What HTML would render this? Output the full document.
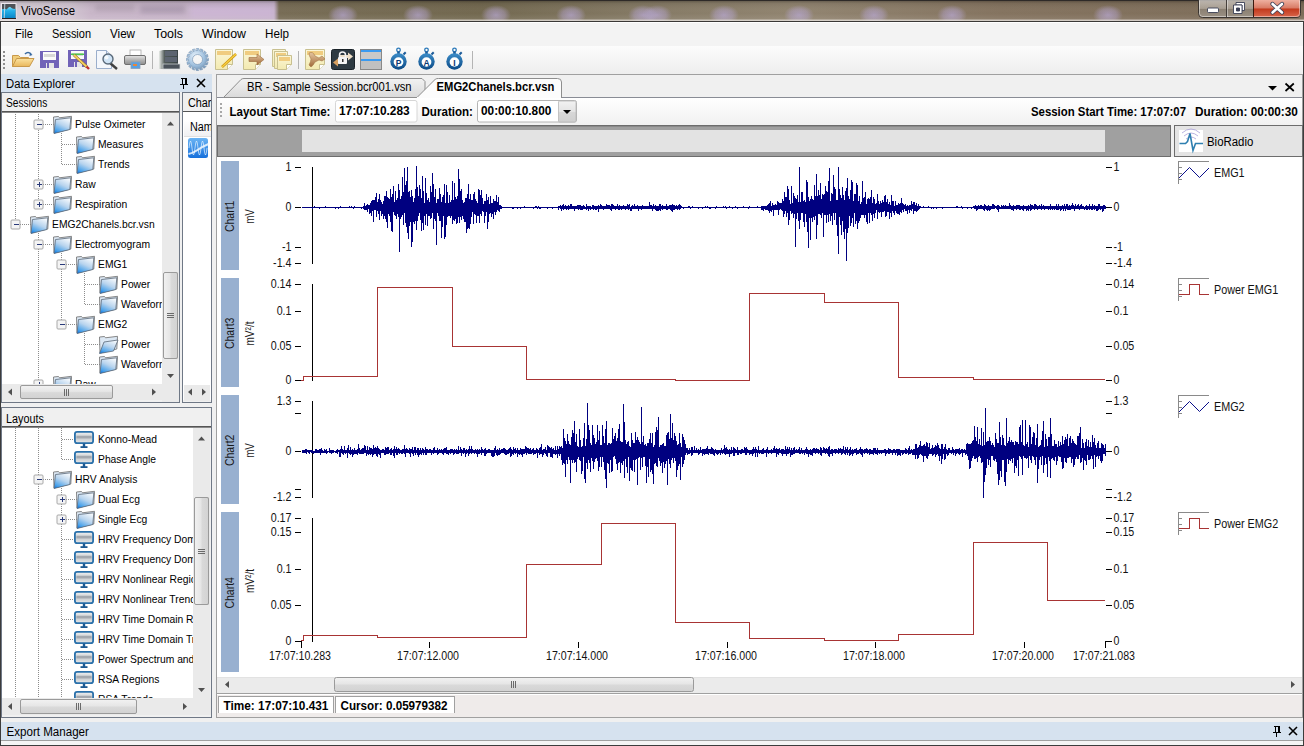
<!DOCTYPE html><html><head><meta charset="utf-8"><style>html,body{margin:0;padding:0;overflow:hidden;background:#f0f0f0}svg{display:block}text{font-family:"Liberation Sans",sans-serif}</style></head><body>
<svg width="1304" height="746" viewBox="0 0 1304 746" shape-rendering="crispEdges">
<defs>
<linearGradient id="gTitle" x1="0" y1="0" x2="1" y2="0"><stop offset="0.0000" stop-color="#d6ced6"/><stop offset="0.0537" stop-color="#d2c6d2"/><stop offset="0.0690" stop-color="#c9b7c9"/><stop offset="0.2101" stop-color="#c3b0c6"/><stop offset="0.2140" stop-color="#776c55"/><stop offset="0.3681" stop-color="#72684f"/><stop offset="0.4985" stop-color="#857a65"/><stop offset="0.6135" stop-color="#918470"/><stop offset="0.7669" stop-color="#84735f"/><stop offset="1.0000" stop-color="#7c6c58"/></linearGradient>
<linearGradient id="gTitleV" x1="0" y1="0" x2="0" y2="1">
 <stop offset="0" stop-color="#000" stop-opacity="0.35"/><stop offset="0.15" stop-color="#000" stop-opacity="0.08"/><stop offset="0.6" stop-color="#fff" stop-opacity="0"/><stop offset="1" stop-color="#fff" stop-opacity="0.12"/></linearGradient>
<radialGradient id="gBlob"><stop offset="0" stop-color="#b8a8d6" stop-opacity="1"/><stop offset="0.6" stop-color="#b8a8d6" stop-opacity="0.6"/><stop offset="1" stop-color="#b8a8d6" stop-opacity="0"/></radialGradient>
<linearGradient id="gMenu" x1="0" y1="0" x2="0" y2="1"><stop offset="0" stop-color="#f5f5f5"/><stop offset="1" stop-color="#f0f0f0"/></linearGradient>
<linearGradient id="gTool" x1="0" y1="0" x2="0" y2="1"><stop offset="0" stop-color="#fcfcfc"/><stop offset="1" stop-color="#eeeeee"/></linearGradient>
<linearGradient id="gThumbH" x1="0" y1="0" x2="0" y2="1"><stop offset="0" stop-color="#f2f2f2"/><stop offset="0.45" stop-color="#e6e6e6"/><stop offset="0.55" stop-color="#d9d9d9"/><stop offset="1" stop-color="#d2d2d2"/></linearGradient>
<linearGradient id="gThumbV" x1="0" y1="0" x2="1" y2="0"><stop offset="0" stop-color="#f2f2f2"/><stop offset="0.45" stop-color="#e6e6e6"/><stop offset="0.55" stop-color="#d9d9d9"/><stop offset="1" stop-color="#d2d2d2"/></linearGradient>
<linearGradient id="gTrackH" x1="0" y1="0" x2="0" y2="1"><stop offset="0" stop-color="#e3e3e3"/><stop offset="0.2" stop-color="#f0f0f0"/><stop offset="1" stop-color="#f2f2f2"/></linearGradient>
<linearGradient id="gTrackV" x1="0" y1="0" x2="1" y2="0"><stop offset="0" stop-color="#e3e3e3"/><stop offset="0.2" stop-color="#f0f0f0"/><stop offset="1" stop-color="#f2f2f2"/></linearGradient>
<linearGradient id="gClose" x1="0" y1="0" x2="0" y2="1"><stop offset="0" stop-color="#eeb0a0"/><stop offset="0.48" stop-color="#d87a64"/><stop offset="0.52" stop-color="#c2391c"/><stop offset="1" stop-color="#d8654a"/></linearGradient>
<linearGradient id="gWinBtn" x1="0" y1="0" x2="0" y2="1"><stop offset="0" stop-color="#dcd8d4" stop-opacity="0.75"/><stop offset="0.48" stop-color="#c4beb6" stop-opacity="0.6"/><stop offset="0.52" stop-color="#8f877c" stop-opacity="0.7"/><stop offset="1" stop-color="#a8a096" stop-opacity="0.7"/></linearGradient>
</defs>
<rect x="0" y="0" width="1304" height="746" fill="#f0f0f0" />
<rect x="0" y="0" width="1304" height="22" fill="url(#gTitle)" />
<filter id="fBlur" x="-20%" y="-50%" width="140%" height="200%"><feGaussianBlur stdDeviation="2.5"/></filter>
<g filter="url(#fBlur)" shape-rendering="auto"><rect x="95" y="5" width="40" height="6" fill="#9a8a9a" opacity="0.45"/><rect x="140" y="6" width="45" height="7" fill="#8a7a90" opacity="0.45"/><rect x="190" y="4" width="84" height="14" fill="#d0b8dc" opacity="0.6"/></g>
<ellipse cx="343" cy="15" rx="15" ry="10" fill="url(#gBlob)" opacity="0.7" shape-rendering="auto"/>
<ellipse cx="418" cy="15" rx="15" ry="10" fill="url(#gBlob)" opacity="0.7" shape-rendering="auto"/>
<ellipse cx="496" cy="15" rx="15" ry="10" fill="url(#gBlob)" opacity="0.7" shape-rendering="auto"/>
<ellipse cx="571" cy="15" rx="15" ry="10" fill="url(#gBlob)" opacity="0.7" shape-rendering="auto"/>
<ellipse cx="643" cy="15" rx="15" ry="10" fill="url(#gBlob)" opacity="0.7" shape-rendering="auto"/>
<ellipse cx="657" cy="15" rx="15" ry="10" fill="url(#gBlob)" opacity="0.7" shape-rendering="auto"/>
<ellipse cx="724" cy="15" rx="15" ry="10" fill="url(#gBlob)" opacity="0.7" shape-rendering="auto"/>
<ellipse cx="799" cy="15" rx="15" ry="10" fill="url(#gBlob)" opacity="0.7" shape-rendering="auto"/>
<ellipse cx="874" cy="15" rx="15" ry="10" fill="url(#gBlob)" opacity="0.7" shape-rendering="auto"/>
<ellipse cx="952" cy="15" rx="15" ry="10" fill="url(#gBlob)" opacity="0.7" shape-rendering="auto"/>
<ellipse cx="1108" cy="15" rx="15" ry="10" fill="url(#gBlob)" opacity="0.7" shape-rendering="auto"/>
<rect x="0" y="0" width="1304" height="22" fill="url(#gTitleV)" />
<rect x="0" y="0" width="1304" height="1" fill="#2e2a28" />
<rect x="0" y="19" width="1304" height="1" fill="#e8e2dc" opacity="0.35"/>
<rect x="0" y="20" width="1304" height="1" fill="#e8e4e0" opacity="0.75"/>
<rect x="0" y="21" width="1304" height="1" fill="#3a3836" />
<defs><linearGradient id="gIco" x1="0" y1="0" x2="0" y2="1"><stop offset="0" stop-color="#7fe0fa"/><stop offset="0.35" stop-color="#25b0e8"/><stop offset="1" stop-color="#0a86c8"/></linearGradient></defs>
<g shape-rendering="auto"><rect x="1" y="3" width="15.5" height="16" fill="#f4f0f4" opacity="0.85"/><rect x="2" y="4" width="13.5" height="14.5" fill="#4e5256"/>
<path d="M2 9.2 L5 8.8 L6.5 9.5 L8.5 7.5 L10 6.8 L11.5 8 L13 8.8 L15.5 9 L15.5 18 L2 18 Z" fill="url(#gIco)"/>
<line x1="4.8" y1="4" x2="4.2" y2="18" stroke="#c8dce6" stroke-width="0.9"/><rect x="2" y="18" width="14" height="1" fill="#2a2222"/></g>
<text x="21" y="15" font-size="12" textLength="54" lengthAdjust="spacingAndGlyphs" >VivoSense</text>
<g shape-rendering="auto">
<path d="M1198.5 0 L1198.5 13.5 Q1198.5 17.5 1202.5 17.5 L1296 17.5 Q1300.5 17.5 1300.5 13.5 L1300.5 0" fill="url(#gWinBtn)" stroke="#3a3430" stroke-width="1"/>
<path d="M1253.5 0 L1253.5 17 L1296 17 Q1300 17 1300 13.5 L1300 0 Z" fill="url(#gClose)"/>
<path d="M1199.5 0.5 V13.5 Q1199.5 16.5 1202.5 16.5 H1296 Q1299.5 16.5 1299.5 13.5 V0.5" fill="none" stroke="#fff" stroke-opacity="0.45"/>
<line x1="1226.5" y1="0" x2="1226.5" y2="17" stroke="#3a3430" stroke-opacity="0.9"/><line x1="1227.5" y1="0" x2="1227.5" y2="17" stroke="#fff" stroke-opacity="0.4"/><line x1="1253.5" y1="0" x2="1253.5" y2="17" stroke="#3a1a10"/>
<rect x="1207.5" y="8" width="11" height="4.5" rx="1" fill="#fff" stroke="#3a3f55" stroke-width="0.9"/>
<path d="M1236 2.5 H1244.5 V10.5 H1242 V5 H1236 Z" fill="#fff" stroke="#3a3f55" stroke-width="0.9"/>
<path d="M1233.5 5 H1242 V13.5 H1233.5 Z M1236.5 8 V11 H1239.5 V8 Z" fill="#fff" fill-rule="evenodd" stroke="#3a3f55" stroke-width="0.9"/>
<rect x="1236.5" y="8" width="3" height="3" fill="#3a3f55"/>
<path d="M1272.5 4 L1282 12.5 M1282 4 L1272.5 12.5" stroke="#3a3f55" stroke-width="4.2" stroke-linecap="round"/><path d="M1272.5 4 L1282 12.5 M1282 4 L1272.5 12.5" stroke="#fff" stroke-width="2.6" stroke-linecap="round"/>
</g>
<rect x="0" y="22" width="1" height="724" fill="#3c3c3c" />
<rect x="1303" y="22" width="1" height="724" fill="#3c3c3c" />
<rect x="0" y="745" width="1304" height="1" fill="#3c3c3c" />
<rect x="1" y="22" width="1302" height="24" fill="#f3f3f3" />
<rect x="1" y="22" width="1302" height="1" fill="#ffffff" />
<text x="15" y="38" font-size="12" textLength="18" lengthAdjust="spacingAndGlyphs" >File</text>
<text x="52" y="38" font-size="12" textLength="39" lengthAdjust="spacingAndGlyphs" >Session</text>
<text x="110" y="38" font-size="12" textLength="25" lengthAdjust="spacingAndGlyphs" >View</text>
<text x="154" y="38" font-size="12" textLength="29" lengthAdjust="spacingAndGlyphs" >Tools</text>
<text x="202" y="38" font-size="12" textLength="44" lengthAdjust="spacingAndGlyphs" >Window</text>
<text x="265" y="38" font-size="12" textLength="24" lengthAdjust="spacingAndGlyphs" >Help</text>
<rect x="1" y="46" width="1302" height="28" fill="url(#gTool)" />
<defs><linearGradient id="gFold" x1="0" y1="0" x2="0" y2="1"><stop offset="0" stop-color="#fbe3a0"/><stop offset="1" stop-color="#e9b65a"/></linearGradient><linearGradient id="gNote" x1="0" y1="0" x2="0" y2="1"><stop offset="0" stop-color="#fbf6d8"/><stop offset="1" stop-color="#f3eab0"/></linearGradient><linearGradient id="gArrowBr" x1="0" y1="0" x2="0" y2="1"><stop offset="0" stop-color="#e6c6a0"/><stop offset="1" stop-color="#a06a3a"/></linearGradient><linearGradient id="gCab" x1="0" y1="0" x2="1" y2="0"><stop offset="0" stop-color="#e8ece8"/><stop offset="0.3" stop-color="#505a58"/><stop offset="1" stop-color="#3a4446"/></linearGradient><radialGradient id="gGear" cx="0.4" cy="0.35" r="0.7"><stop offset="0" stop-color="#e8f2fb"/><stop offset="0.6" stop-color="#9fc0de"/><stop offset="1" stop-color="#6e8fb0"/></radialGradient><linearGradient id="gPrint" x1="0" y1="0" x2="0" y2="1"><stop offset="0" stop-color="#e6e6e6"/><stop offset="0.5" stop-color="#b4b4b4"/><stop offset="1" stop-color="#8e8e8e"/></linearGradient><linearGradient id="gBars" x1="0" y1="0" x2="0" y2="1"><stop offset="0" stop-color="#f2f2f2"/><stop offset="1" stop-color="#9a9a9a"/></linearGradient><linearGradient id="gWatch" x1="0" y1="0" x2="0" y2="1"><stop offset="0" stop-color="#3b8cc8"/><stop offset="1" stop-color="#0c4a86"/></linearGradient></defs>
<g shape-rendering="auto">
<rect x="3" y="51" width="2" height="2" fill="#8e8e8e"/>
<rect x="3" y="55" width="2" height="2" fill="#8e8e8e"/>
<rect x="3" y="59" width="2" height="2" fill="#8e8e8e"/>
<rect x="3" y="63" width="2" height="2" fill="#8e8e8e"/>
<rect x="3" y="67" width="2" height="2" fill="#8e8e8e"/>
<path d="M12.5 55.5 h6 l2 2 h8 v9 h-16 z" fill="#f0cd7a" stroke="#c9994a"/><path d="M12.5 66.5 l4 -8 h17.5 l-4.5 8 z" fill="url(#gFold)" stroke="#c9994a"/><path d="M25 54 q3 -3 6 0" stroke="#3a6aa0" stroke-width="1.6" fill="none"/><path d="M30 52.5 l2.5 2.5 l-3 1z" fill="#3a6aa0"/>
<rect x="40" y="51" width="19" height="17" fill="#7163b8"/><rect x="43" y="52" width="13" height="8" fill="#fafafa"/><rect x="44" y="54" width="11" height="3" fill="#d8d8d8"/><rect x="46" y="63" width="8" height="5" fill="#e6e6e6"/><rect x="47" y="63" width="2" height="5" fill="#7163b8"/>
<rect x="68" y="50" width="19" height="17" fill="#7163b8"/><rect x="71" y="51" width="13" height="8" fill="#fafafa"/><rect x="72" y="53" width="11" height="3" fill="#d8d8d8"/><rect x="74" y="62" width="8" height="5" fill="#e6e6e6"/><rect x="75" y="62" width="2" height="5" fill="#7163b8"/>
<rect x="71" y="53.5" width="13" height="1.5" fill="#4cc84c"/>
<path d="M74 55 L87 67" stroke="#8a6a20" stroke-width="3"/><path d="M74 55 L87 67" stroke="#f4d060" stroke-width="1.8"/><path d="M86.5 66.5 L89 69" stroke="#c03030" stroke-width="2.4"/>
<path d="M96.5 50.5 h10 l5 5 v13 h-15 z" fill="#f4f7fc" stroke="#9aaecc"/><path d="M106.5 50.5 v5 h5" fill="#dde6f2" stroke="#9aaecc"/><path d="M110 63 L117 69" stroke="#404040" stroke-width="2.4"/><circle cx="108" cy="59" r="5" fill="#d0e4f6" stroke="#5a6a7a" stroke-width="1.4"/><circle cx="106.5" cy="57.5" r="2" fill="#fff" opacity="0.8"/>
<rect x="130" y="50" width="11" height="6" fill="#fff" stroke="#aaa" stroke-width="0.8"/><rect x="124.5" y="55.5" width="21" height="9" rx="1.5" fill="url(#gPrint)" stroke="#707070"/><rect x="131" y="62" width="9" height="6.5" fill="#5aa0e0" stroke="#8aa0b8" stroke-width="0.8"/><rect x="133" y="64" width="4" height="2" fill="#e8863a"/>
<rect x="152" y="51" width="1" height="18" fill="#b4b4b4"/>
<path d="M159 51 l4 -1 h15 v19 h-19 z" fill="url(#gCab)"/><rect x="165" y="51" width="12" height="5" fill="#5c6470"/><rect x="165" y="57" width="12" height="5" fill="#5c6470"/><rect x="163" y="64" width="17" height="5" fill="#4a525a" stroke="#d8dcdc" stroke-width="0.7"/>
<path d="M208.4 58.2 L208.4 60.8 L206.3 61.5 L205.7 63.2 L208.1 62.5 L207.1 64.9 L204.9 64.7 L203.7 66.0 L206.2 66.3 L204.3 68.2 L202.3 67.1 L200.7 67.9 L202.9 69.1 L200.5 70.1 L199.0 68.4 L197.3 68.5 L198.8 70.4 L196.2 70.4 L195.5 68.3 L193.8 67.7 L194.5 70.1 L192.1 69.1 L192.3 66.9 L191.0 65.7 L190.7 68.2 L188.8 66.3 L189.9 64.3 L189.1 62.7 L187.9 64.9 L186.9 62.5 L188.6 61.0 L188.5 59.3 L186.6 60.8 L186.6 58.2 L188.7 57.5 L189.3 55.8 L186.9 56.5 L187.9 54.1 L190.1 54.3 L191.3 53.0 L188.8 52.7 L190.7 50.8 L192.7 51.9 L194.3 51.1 L192.1 49.9 L194.5 48.9 L196.0 50.6 L197.7 50.5 L196.2 48.6 L198.8 48.6 L199.5 50.7 L201.2 51.3 L200.5 48.9 L202.9 49.9 L202.7 52.1 L204.0 53.3 L204.3 50.8 L206.2 52.7 L205.1 54.7 L205.9 56.3 L207.1 54.1 L208.1 56.5 L206.4 58.0 L206.5 59.7 Z M202.5 59.5 a5 5 0 1 0 -10 0 a5 5 0 1 0 10 0 Z" fill="url(#gGear)" fill-rule="evenodd" stroke="#7d9ab8" stroke-width="0.7"/>
<path d="M215.5 49.5 h17 v15 l-5 5 h-12 z" fill="url(#gNote)" stroke="#c8c090"/><rect x="217" y="51" width="14" height="4" fill="#f0cc80"/><path d="M232.5 64.5 h-5 v5" fill="#fff" stroke="#c8c090"/>
<path d="M222 67 L236 54" stroke="#c89010" stroke-width="2.6"/><path d="M222 67 L236 54" stroke="#f8d040" stroke-width="1.4"/>
<path d="M243.5 49.5 h17 v15 l-5 5 h-12 z" fill="url(#gNote)" stroke="#c8c090"/><rect x="245" y="51" width="14" height="4" fill="#f0cc80"/><path d="M260.5 64.5 h-5 v5" fill="#fff" stroke="#c8c090"/>
<path d="M249 57.5 h8 v-3.5 l7 5.5 l-7 5.5 v-3.5 h-8 z" fill="url(#gArrowBr)" stroke="#9a6a3a" stroke-width="0.6"/>
<path d="M272.5 49.5 h13 v12 l-5 5 h-8 z" fill="url(#gNote)" stroke="#c8c090"/><rect x="274" y="51" width="10" height="4" fill="#f0cc80"/><path d="M285.5 61.5 h-5 v5" fill="#fff" stroke="#c8c090"/>
<path d="M274.5 51.5 h13 v12 l-5 5 h-8 z" fill="url(#gNote)" stroke="#c8c090"/><rect x="276" y="53" width="10" height="4" fill="#f0cc80"/><path d="M287.5 63.5 h-5 v5" fill="#fff" stroke="#c8c090"/>
<path d="M277.5 55.5 h14 v9 l-5 5 h-9 z" fill="url(#gNote)" stroke="#c8c090"/><rect x="279" y="57" width="11" height="4" fill="#f0cc80"/><path d="M291.5 64.5 h-5 v5" fill="#fff" stroke="#c8c090"/>
<rect x="298" y="51" width="1" height="18" fill="#b4b4b4"/>
<path d="M305.5 49.5 h19 v15 l-5 5 h-14 z" fill="url(#gNote)" stroke="#c8c090"/><rect x="307" y="51" width="16" height="4" fill="#f0cc80"/><path d="M324.5 64.5 h-5 v5" fill="#fff" stroke="#c8c090"/>
<path d="M309 53 q4 -2 6 3 l4 2 l3 -2 l3 3 l-3 2 l-3 -1 l-4 2 q-2 4 -4 5 l-2 -2 q2 -4 2 -6 q-2 -3 -2 -6z" fill="url(#gArrowBr)" stroke="#9a6a3a" stroke-width="0.5"/>
<rect x="331.5" y="49.5" width="23" height="20" rx="2" fill="#2e3a42" stroke="#1a2228"/><path d="M340 55 h8 v-2.5 l5 4 l-5 4 v-2.5 h-8z" fill="#efe0c8"/><path d="M346 64 h-8 v2.5 l-5 -4 l5 -4 v2.5 h8z" fill="#d8a060"/><rect x="338" y="57" width="9" height="7" rx="1" fill="#f4f4f4"/><path d="M339.5 57 v-2 a3 3 0 0 1 6 0 v2" stroke="#f4f4f4" stroke-width="1.5" fill="none"/><rect x="342" y="59" width="1.5" height="3" fill="#333"/>
<rect x="360.5" y="49.5" width="21" height="20" fill="url(#gBars)" stroke="#888"/><rect x="361" y="50" width="20" height="2" fill="#3a9af0"/><rect x="361" y="59" width="20" height="2" fill="#3a9af0"/><rect x="361" y="52" width="20" height="7" fill="#c8c8c8"/><rect x="361" y="61" width="20" height="8" fill="#c0c0c0"/>
<circle cx="398.5" cy="50" r="1.8" fill="none" stroke="#2a78b8" stroke-width="1.3"/><rect x="397.2" y="51.5" width="2.6" height="2.5" fill="#1a5a98"/><path d="M403.5 54.5 l2.2 -2.2" stroke="#1a5a98" stroke-width="2"/><circle cx="398.5" cy="61.5" r="8.2" fill="url(#gWatch)"/><ellipse cx="398.5" cy="62" rx="4.9" ry="4.7" fill="#fff"/><text x="398.5" y="65.6" font-size="8.5" font-weight="bold" fill="#0c3a76" text-anchor="middle">P</text>
<circle cx="426.5" cy="50" r="1.8" fill="none" stroke="#2a78b8" stroke-width="1.3"/><rect x="425.2" y="51.5" width="2.6" height="2.5" fill="#1a5a98"/><path d="M431.5 54.5 l2.2 -2.2" stroke="#1a5a98" stroke-width="2"/><circle cx="426.5" cy="61.5" r="8.2" fill="url(#gWatch)"/><ellipse cx="426.5" cy="62" rx="4.9" ry="4.7" fill="#fff"/><text x="426.5" y="65.6" font-size="8.5" font-weight="bold" fill="#0c3a76" text-anchor="middle">A</text>
<circle cx="454.5" cy="50" r="1.8" fill="none" stroke="#2a78b8" stroke-width="1.3"/><rect x="453.2" y="51.5" width="2.6" height="2.5" fill="#1a5a98"/><path d="M459.5 54.5 l2.2 -2.2" stroke="#1a5a98" stroke-width="2"/><circle cx="454.5" cy="61.5" r="8.2" fill="url(#gWatch)"/><ellipse cx="454.5" cy="62" rx="4.9" ry="4.7" fill="#fff"/><text x="454.5" y="65.6" font-size="8.5" font-weight="bold" fill="#0c3a76" text-anchor="middle">I</text>
<rect x="472" y="51" width="1" height="18" fill="#b4b4b4"/>
</g>
<defs><linearGradient id="gFolder" x1="0.7" y1="0" x2="0.2" y2="1"><stop offset="0" stop-color="#f4f8fc"/><stop offset="0.45" stop-color="#b8d4ee"/><stop offset="0.85" stop-color="#4aa2ea"/><stop offset="1" stop-color="#1a7ee0"/></linearGradient><linearGradient id="gFolderB" x1="0" y1="0" x2="0" y2="1"><stop offset="0" stop-color="#cfe2f4"/><stop offset="1" stop-color="#7fb0de"/></linearGradient><linearGradient id="gLay" x1="0" y1="0" x2="0" y2="1"><stop offset="0" stop-color="#f4f4f4"/><stop offset="0.5" stop-color="#c4c8cc"/><stop offset="1" stop-color="#e8e8e8"/></linearGradient><clipPath id="cpSess"><rect x="2" y="113" width="160" height="271"/></clipPath><clipPath id="cpLay"><rect x="2" y="428" width="191" height="270"/></clipPath></defs>
<rect x="1" y="74" width="211" height="18" fill="#d6e2ef" />
<text x="6" y="88" font-size="12" textLength="68.96" lengthAdjust="spacingAndGlyphs" >Data Explorer</text>
<g shape-rendering="crispEdges"><rect x="181" y="78" width="6" height="1" fill="#000"/><rect x="182" y="79" width="1" height="5" fill="#000"/><rect x="185" y="79" width="2" height="5" fill="#000"/><rect x="180" y="84" width="8" height="1" fill="#000"/><rect x="183" y="85" width="1" height="4" fill="#000"/></g>
<path d="M197 79 L205 87 M205 79 L197 87" stroke="#000" stroke-width="1.6" shape-rendering="auto"/>
<rect x="1" y="92" width="179" height="1" fill="#6f7886" />
<rect x="1" y="402" width="179" height="1" fill="#6f7886" />
<rect x="1" y="92" width="1" height="311" fill="#6f7886" />
<rect x="179" y="92" width="1" height="311" fill="#6f7886" />
<rect x="2" y="93" width="177" height="18" fill="#f0f0f0" />
<rect x="2" y="111" width="177" height="1" fill="#555555" />
<rect x="2" y="112" width="177" height="1" fill="#8a8a8a" />
<text x="6" y="107" font-size="12" textLength="41.24" lengthAdjust="spacingAndGlyphs" >Sessions</text>
<rect x="2" y="113" width="160" height="271" fill="#ffffff" />
<line x1="15.5" y1="112" x2="15.5" y2="224" stroke="#8c8c8c" stroke-dasharray="1 1" clip-path="url(#cpSess)"/>
<line x1="38.5" y1="112" x2="38.5" y2="204" stroke="#8c8c8c" stroke-dasharray="1 1" clip-path="url(#cpSess)"/>
<line x1="61.5" y1="133" x2="61.5" y2="164" stroke="#8c8c8c" stroke-dasharray="1 1" clip-path="url(#cpSess)"/>
<line x1="38.5" y1="233" x2="38.5" y2="390" stroke="#8c8c8c" stroke-dasharray="1 1" clip-path="url(#cpSess)"/>
<line x1="61.5" y1="253" x2="61.5" y2="324" stroke="#8c8c8c" stroke-dasharray="1 1" clip-path="url(#cpSess)"/>
<line x1="84.5" y1="273" x2="84.5" y2="304" stroke="#8c8c8c" stroke-dasharray="1 1" clip-path="url(#cpSess)"/>
<line x1="84.5" y1="333" x2="84.5" y2="364" stroke="#8c8c8c" stroke-dasharray="1 1" clip-path="url(#cpSess)"/>
<line x1="43" y1="124.5" x2="55" y2="124.5" stroke="#8c8c8c" stroke-dasharray="1 1" clip-path="url(#cpSess)"/>
<line x1="62" y1="144.5" x2="78" y2="144.5" stroke="#8c8c8c" stroke-dasharray="1 1" clip-path="url(#cpSess)"/>
<line x1="62" y1="164.5" x2="78" y2="164.5" stroke="#8c8c8c" stroke-dasharray="1 1" clip-path="url(#cpSess)"/>
<line x1="43" y1="184.5" x2="55" y2="184.5" stroke="#8c8c8c" stroke-dasharray="1 1" clip-path="url(#cpSess)"/>
<line x1="43" y1="204.5" x2="55" y2="204.5" stroke="#8c8c8c" stroke-dasharray="1 1" clip-path="url(#cpSess)"/>
<line x1="20" y1="224.5" x2="32" y2="224.5" stroke="#8c8c8c" stroke-dasharray="1 1" clip-path="url(#cpSess)"/>
<line x1="43" y1="244.5" x2="55" y2="244.5" stroke="#8c8c8c" stroke-dasharray="1 1" clip-path="url(#cpSess)"/>
<line x1="66" y1="264.5" x2="78" y2="264.5" stroke="#8c8c8c" stroke-dasharray="1 1" clip-path="url(#cpSess)"/>
<line x1="85" y1="284.5" x2="101" y2="284.5" stroke="#8c8c8c" stroke-dasharray="1 1" clip-path="url(#cpSess)"/>
<line x1="85" y1="304.5" x2="101" y2="304.5" stroke="#8c8c8c" stroke-dasharray="1 1" clip-path="url(#cpSess)"/>
<line x1="66" y1="324.5" x2="78" y2="324.5" stroke="#8c8c8c" stroke-dasharray="1 1" clip-path="url(#cpSess)"/>
<line x1="85" y1="344.5" x2="101" y2="344.5" stroke="#8c8c8c" stroke-dasharray="1 1" clip-path="url(#cpSess)"/>
<line x1="85" y1="364.5" x2="101" y2="364.5" stroke="#8c8c8c" stroke-dasharray="1 1" clip-path="url(#cpSess)"/>
<line x1="43" y1="384.5" x2="55" y2="384.5" stroke="#8c8c8c" stroke-dasharray="1 1" clip-path="url(#cpSess)"/>
<g clip-path="url(#cpSess)"><rect x="34.0" y="120.0" width="9" height="9" rx="1" fill="#f4f4f4" stroke="#a8a8a8" shape-rendering="auto"/><rect x="36.5" y="124.0" width="5" height="1" fill="#2a3a7a"/></g>
<g clip-path="url(#cpSess)" shape-rendering="auto"><path d="M53.5 117 L58.5 116.5 L59.5 117.8 L71.5 116.3 L70.8 129 L54 133 Z" fill="#dce8f4" stroke="#7a7a7a" stroke-width="0.9"/><path d="M55.5 119.5 L70.8 117.8 L69.8 129.5 L54 133.5 Z" fill="url(#gFolder)" stroke="#5a6878" stroke-width="0.8"/></g>
<text x="75" y="128" font-size="11.6" textLength="70.52" lengthAdjust="spacingAndGlyphs" clip-path="url(#cpSess)">Pulse Oximeter</text>
<g clip-path="url(#cpSess)" shape-rendering="auto"><path d="M76.5 137 L81.5 136.5 L82.5 137.8 L94.5 136.3 L93.8 149 L77 153 Z" fill="#dce8f4" stroke="#7a7a7a" stroke-width="0.9"/><path d="M78.5 139.5 L93.8 137.8 L92.8 149.5 L77 153.5 Z" fill="url(#gFolder)" stroke="#5a6878" stroke-width="0.8"/></g>
<text x="98" y="148" font-size="11.6" textLength="45.3" lengthAdjust="spacingAndGlyphs" clip-path="url(#cpSess)">Measures</text>
<g clip-path="url(#cpSess)" shape-rendering="auto"><path d="M76.5 157 L81.5 156.5 L82.5 157.8 L94.5 156.3 L93.8 169 L77 173 Z" fill="#dce8f4" stroke="#7a7a7a" stroke-width="0.9"/><path d="M78.5 159.5 L93.8 157.8 L92.8 169.5 L77 173.5 Z" fill="url(#gFolder)" stroke="#5a6878" stroke-width="0.8"/></g>
<text x="98" y="168" font-size="11.6" textLength="31.72" lengthAdjust="spacingAndGlyphs" clip-path="url(#cpSess)">Trends</text>
<g clip-path="url(#cpSess)"><rect x="34.0" y="180.0" width="9" height="9" rx="1" fill="#f4f4f4" stroke="#a8a8a8" shape-rendering="auto"/><rect x="36.5" y="184.0" width="5" height="1" fill="#2a3a7a"/><rect x="38.5" y="182.0" width="1" height="5" fill="#2a3a7a"/></g>
<g clip-path="url(#cpSess)" shape-rendering="auto"><path d="M53.5 177 L58.5 176.5 L59.5 177.8 L71.5 176.3 L70.8 189 L54 193 Z" fill="#dce8f4" stroke="#7a7a7a" stroke-width="0.9"/><path d="M55.5 179.5 L70.8 177.8 L69.8 189.5 L54 193.5 Z" fill="url(#gFolder)" stroke="#5a6878" stroke-width="0.8"/></g>
<text x="75" y="188" font-size="11.6" textLength="20.64" lengthAdjust="spacingAndGlyphs" clip-path="url(#cpSess)">Raw</text>
<g clip-path="url(#cpSess)"><rect x="34.0" y="200.0" width="9" height="9" rx="1" fill="#f4f4f4" stroke="#a8a8a8" shape-rendering="auto"/><rect x="36.5" y="204.0" width="5" height="1" fill="#2a3a7a"/><rect x="38.5" y="202.0" width="1" height="5" fill="#2a3a7a"/></g>
<g clip-path="url(#cpSess)" shape-rendering="auto"><path d="M53.5 197 L58.5 196.5 L59.5 197.8 L71.5 196.3 L70.8 209 L54 213 Z" fill="#dce8f4" stroke="#7a7a7a" stroke-width="0.9"/><path d="M55.5 199.5 L70.8 197.8 L69.8 209.5 L54 213.5 Z" fill="url(#gFolder)" stroke="#5a6878" stroke-width="0.8"/></g>
<text x="75" y="208" font-size="11.6" textLength="52.2" lengthAdjust="spacingAndGlyphs" clip-path="url(#cpSess)">Respiration</text>
<g clip-path="url(#cpSess)"><rect x="11.0" y="220.0" width="9" height="9" rx="1" fill="#f4f4f4" stroke="#a8a8a8" shape-rendering="auto"/><rect x="13.5" y="224.0" width="5" height="1" fill="#2a3a7a"/></g>
<g clip-path="url(#cpSess)" shape-rendering="auto"><path d="M30.5 217 L35.5 216.5 L36.5 217.8 L48.5 216.3 L47.8 229 L31 233 Z" fill="#dce8f4" stroke="#7a7a7a" stroke-width="0.9"/><path d="M32.5 219.5 L47.8 217.8 L46.8 229.5 L31 233.5 Z" fill="url(#gFolder)" stroke="#5a6878" stroke-width="0.8"/></g>
<text x="52" y="228" font-size="11.6" textLength="102.64" lengthAdjust="spacingAndGlyphs" clip-path="url(#cpSess)">EMG2Chanels.bcr.vsn</text>
<g clip-path="url(#cpSess)"><rect x="34.0" y="240.0" width="9" height="9" rx="1" fill="#f4f4f4" stroke="#a8a8a8" shape-rendering="auto"/><rect x="36.5" y="244.0" width="5" height="1" fill="#2a3a7a"/></g>
<g clip-path="url(#cpSess)" shape-rendering="auto"><path d="M53.5 237 L58.5 236.5 L59.5 237.8 L71.5 236.3 L70.8 249 L54 253 Z" fill="#dce8f4" stroke="#7a7a7a" stroke-width="0.9"/><path d="M55.5 239.5 L70.8 237.8 L69.8 249.5 L54 253.5 Z" fill="url(#gFolder)" stroke="#5a6878" stroke-width="0.8"/></g>
<text x="75" y="248" font-size="11.6" textLength="75.11" lengthAdjust="spacingAndGlyphs" clip-path="url(#cpSess)">Electromyogram</text>
<g clip-path="url(#cpSess)"><rect x="57.0" y="260.0" width="9" height="9" rx="1" fill="#f4f4f4" stroke="#a8a8a8" shape-rendering="auto"/><rect x="59.5" y="264.0" width="5" height="1" fill="#2a3a7a"/></g>
<g clip-path="url(#cpSess)" shape-rendering="auto"><path d="M76.5 257 L81.5 256.5 L82.5 257.8 L94.5 256.3 L93.8 269 L77 273 Z" fill="#dce8f4" stroke="#7a7a7a" stroke-width="0.9"/><path d="M78.5 259.5 L93.8 257.8 L92.8 269.5 L77 273.5 Z" fill="url(#gFolder)" stroke="#5a6878" stroke-width="0.8"/></g>
<text x="98" y="268" font-size="11.6" textLength="29.23" lengthAdjust="spacingAndGlyphs" clip-path="url(#cpSess)">EMG1</text>
<g clip-path="url(#cpSess)" shape-rendering="auto"><path d="M99.5 277 L104.5 276.5 L105.5 277.8 L117.5 276.3 L116.8 289 L100 293 Z" fill="#dce8f4" stroke="#7a7a7a" stroke-width="0.9"/><path d="M101.5 279.5 L116.8 277.8 L115.8 289.5 L100 293.5 Z" fill="url(#gFolder)" stroke="#5a6878" stroke-width="0.8"/></g>
<text x="121" y="288" font-size="11.6" textLength="29.25" lengthAdjust="spacingAndGlyphs" clip-path="url(#cpSess)">Power</text>
<g clip-path="url(#cpSess)" shape-rendering="auto"><path d="M99.5 297 L104.5 296.5 L105.5 297.8 L117.5 296.3 L116.8 309 L100 313 Z" fill="#dce8f4" stroke="#7a7a7a" stroke-width="0.9"/><path d="M101.5 299.5 L116.8 297.8 L115.8 309.5 L100 313.5 Z" fill="url(#gFolder)" stroke="#5a6878" stroke-width="0.8"/></g>
<text x="121" y="308" font-size="11.6" textLength="46.61" lengthAdjust="spacingAndGlyphs" clip-path="url(#cpSess)">Waveform</text>
<g clip-path="url(#cpSess)"><rect x="57.0" y="320.0" width="9" height="9" rx="1" fill="#f4f4f4" stroke="#a8a8a8" shape-rendering="auto"/><rect x="59.5" y="324.0" width="5" height="1" fill="#2a3a7a"/></g>
<g clip-path="url(#cpSess)" shape-rendering="auto"><path d="M76.5 317 L81.5 316.5 L82.5 317.8 L94.5 316.3 L93.8 329 L77 333 Z" fill="#dce8f4" stroke="#7a7a7a" stroke-width="0.9"/><path d="M78.5 319.5 L93.8 317.8 L92.8 329.5 L77 333.5 Z" fill="url(#gFolder)" stroke="#5a6878" stroke-width="0.8"/></g>
<text x="98" y="328" font-size="11.6" textLength="29.23" lengthAdjust="spacingAndGlyphs" clip-path="url(#cpSess)">EMG2</text>
<g clip-path="url(#cpSess)" shape-rendering="auto"><path d="M99.5 337 L104.5 336.5 L105.5 337.8 L117.5 336.3 L116.8 349 L100 353 Z" fill="#dce8f4" stroke="#7a7a7a" stroke-width="0.9"/><path d="M104 342 L118 340 L113.5 351 L99.5 353.5 Z" fill="url(#gFolder)" stroke="#5a6878" stroke-width="0.8"/></g>
<text x="121" y="348" font-size="11.6" textLength="29.25" lengthAdjust="spacingAndGlyphs" clip-path="url(#cpSess)">Power</text>
<g clip-path="url(#cpSess)" shape-rendering="auto"><path d="M99.5 357 L104.5 356.5 L105.5 357.8 L117.5 356.3 L116.8 369 L100 373 Z" fill="#dce8f4" stroke="#7a7a7a" stroke-width="0.9"/><path d="M101.5 359.5 L116.8 357.8 L115.8 369.5 L100 373.5 Z" fill="url(#gFolder)" stroke="#5a6878" stroke-width="0.8"/></g>
<text x="121" y="368" font-size="11.6" textLength="46.61" lengthAdjust="spacingAndGlyphs" clip-path="url(#cpSess)">Waveform</text>
<g clip-path="url(#cpSess)"><rect x="34.0" y="380.0" width="9" height="9" rx="1" fill="#f4f4f4" stroke="#a8a8a8" shape-rendering="auto"/><rect x="36.5" y="384.0" width="5" height="1" fill="#2a3a7a"/><rect x="38.5" y="382.0" width="1" height="5" fill="#2a3a7a"/></g>
<g clip-path="url(#cpSess)" shape-rendering="auto"><path d="M53.5 377 L58.5 376.5 L59.5 377.8 L71.5 376.3 L70.8 389 L54 393 Z" fill="#dce8f4" stroke="#7a7a7a" stroke-width="0.9"/><path d="M55.5 379.5 L70.8 377.8 L69.8 389.5 L54 393.5 Z" fill="url(#gFolder)" stroke="#5a6878" stroke-width="0.8"/></g>
<text x="75" y="388" font-size="11.6" textLength="20.64" lengthAdjust="spacingAndGlyphs" clip-path="url(#cpSess)">Raw</text>
<rect x="162" y="113" width="17" height="271" fill="#eaeaea" />
<rect x="163" y="272" width="15" height="87" fill="url(#gThumbV)" rx="1.5"/>
<rect x="163.5" y="272.5" width="14" height="86" rx="1.5" fill="none" stroke="#9a9a9a" shape-rendering="auto"/>
<rect x="167" y="313" width="7" height="1" fill="#6a6a6a" />
<rect x="167" y="315" width="7" height="1" fill="#6a6a6a" />
<rect x="167" y="317" width="7" height="1" fill="#6a6a6a" />
<path d="M167 125.5 l3.5 -4 l3.5 4z" fill="#505050" shape-rendering="auto"/>
<path d="M167 374 l3.5 4 l3.5 -4z" fill="#505050" shape-rendering="auto"/>
<rect x="2" y="384" width="160" height="16" fill="#eaeaea" />
<rect x="20.5" y="385.5" width="92" height="13" rx="1.5" fill="url(#gThumbH)" stroke="#9a9a9a" shape-rendering="auto"/>
<rect x="64" y="389" width="1" height="7" fill="#6a6a6a" />
<rect x="66" y="389" width="1" height="7" fill="#6a6a6a" />
<rect x="68" y="389" width="1" height="7" fill="#6a6a6a" />
<path d="M12 388.5 l-4 3.5 l4 3.5z" fill="#505050" shape-rendering="auto"/>
<path d="M152 388.5 l4 3.5 l-4 3.5z" fill="#505050" shape-rendering="auto"/>
<rect x="162" y="384" width="17" height="18" fill="#eaeaea" />
<rect x="182" y="92" width="30" height="1" fill="#6f7886" />
<rect x="182" y="402" width="30" height="1" fill="#6f7886" />
<rect x="182" y="92" width="1" height="311" fill="#6f7886" />
<rect x="211" y="92" width="1" height="311" fill="#6f7886" />
<rect x="183" y="93" width="28" height="18" fill="#f0f0f0" />
<rect x="183" y="111" width="28" height="1" fill="#555555" />
<clipPath id="cpChart"><rect x="183" y="93" width="28" height="308"/></clipPath>
<text x="188" y="107" font-size="12" textLength="26.41" lengthAdjust="spacingAndGlyphs" clip-path="url(#cpChart)">Chart</text>
<rect x="183" y="112" width="28" height="288" fill="#ffffff" />
<defs><linearGradient id="gColH" x1="0" y1="0" x2="0" y2="1"><stop offset="0" stop-color="#ffffff"/><stop offset="1" stop-color="#f0f0f2"/></linearGradient></defs>
<rect x="184" y="120" width="27" height="16" fill="url(#gColH)" />
<rect x="184" y="136" width="27" height="1" fill="#e0e0e0" />
<text x="190" y="131" font-size="12" textLength="28.81" lengthAdjust="spacingAndGlyphs" clip-path="url(#cpChart)">Name</text>
<defs><linearGradient id="gChIco" x1="0" y1="0" x2="0" y2="1"><stop offset="0" stop-color="#6ab4f4"/><stop offset="1" stop-color="#1670dc"/></linearGradient></defs>
<g shape-rendering="auto" clip-path="url(#cpChart)"><rect x="188" y="138" width="20" height="20" rx="2.5" fill="url(#gChIco)"/><path d="M189 148 q1.5 -14 3 0 t3 0 t3 0 t3 0 t3 0 t3 0" stroke="#e8f4ff" stroke-opacity="0.75" fill="none" stroke-width="0.9"/><path d="M188.5 154 q5 -1 9 -4 t11 -6" stroke="#f0f8ff" stroke-opacity="0.85" fill="none" stroke-width="2"/></g>
<rect x="184" y="385" width="26" height="16" fill="#eaeaea" />
<path d="M192 388.5 l-4 3.5 l4 3.5z M202 388.5 l4 3.5 l-4 3.5z" fill="#505050" shape-rendering="auto"/>
<rect x="1" y="407" width="211" height="1" fill="#6f7886" />
<rect x="1" y="717" width="211" height="1" fill="#6f7886" />
<rect x="1" y="407" width="1" height="311" fill="#6f7886" />
<rect x="211" y="407" width="1" height="311" fill="#6f7886" />
<rect x="2" y="408" width="209" height="18" fill="#f0f0f0" />
<rect x="2" y="426" width="209" height="1" fill="#555555" />
<rect x="2" y="427" width="209" height="1" fill="#8a8a8a" />
<text x="6" y="422.8" font-size="12" textLength="37.81" lengthAdjust="spacingAndGlyphs" >Layouts</text>
<rect x="2" y="428" width="191" height="270" fill="#ffffff" />
<line x1="15.5" y1="428" x2="15.5" y2="698" stroke="#8c8c8c" stroke-dasharray="1 1" clip-path="url(#cpLay)"/>
<line x1="38.5" y1="428" x2="38.5" y2="698" stroke="#8c8c8c" stroke-dasharray="1 1" clip-path="url(#cpLay)"/>
<line x1="61.5" y1="428" x2="61.5" y2="459" stroke="#8c8c8c" stroke-dasharray="1 1" clip-path="url(#cpLay)"/>
<line x1="61.5" y1="488" x2="61.5" y2="698" stroke="#8c8c8c" stroke-dasharray="1 1" clip-path="url(#cpLay)"/>
<line x1="62" y1="439.5" x2="78" y2="439.5" stroke="#8c8c8c" stroke-dasharray="1 1" clip-path="url(#cpLay)"/>
<line x1="62" y1="459.5" x2="78" y2="459.5" stroke="#8c8c8c" stroke-dasharray="1 1" clip-path="url(#cpLay)"/>
<line x1="43" y1="479.5" x2="55" y2="479.5" stroke="#8c8c8c" stroke-dasharray="1 1" clip-path="url(#cpLay)"/>
<line x1="66" y1="499.5" x2="78" y2="499.5" stroke="#8c8c8c" stroke-dasharray="1 1" clip-path="url(#cpLay)"/>
<line x1="66" y1="519.5" x2="78" y2="519.5" stroke="#8c8c8c" stroke-dasharray="1 1" clip-path="url(#cpLay)"/>
<line x1="62" y1="539.5" x2="78" y2="539.5" stroke="#8c8c8c" stroke-dasharray="1 1" clip-path="url(#cpLay)"/>
<line x1="62" y1="559.5" x2="78" y2="559.5" stroke="#8c8c8c" stroke-dasharray="1 1" clip-path="url(#cpLay)"/>
<line x1="62" y1="579.5" x2="78" y2="579.5" stroke="#8c8c8c" stroke-dasharray="1 1" clip-path="url(#cpLay)"/>
<line x1="62" y1="599.5" x2="78" y2="599.5" stroke="#8c8c8c" stroke-dasharray="1 1" clip-path="url(#cpLay)"/>
<line x1="62" y1="619.5" x2="78" y2="619.5" stroke="#8c8c8c" stroke-dasharray="1 1" clip-path="url(#cpLay)"/>
<line x1="62" y1="639.5" x2="78" y2="639.5" stroke="#8c8c8c" stroke-dasharray="1 1" clip-path="url(#cpLay)"/>
<line x1="62" y1="659.5" x2="78" y2="659.5" stroke="#8c8c8c" stroke-dasharray="1 1" clip-path="url(#cpLay)"/>
<line x1="62" y1="679.5" x2="78" y2="679.5" stroke="#8c8c8c" stroke-dasharray="1 1" clip-path="url(#cpLay)"/>
<line x1="62" y1="699.5" x2="78" y2="699.5" stroke="#8c8c8c" stroke-dasharray="1 1" clip-path="url(#cpLay)"/>
<g clip-path="url(#cpLay)" shape-rendering="auto"><rect x="74.9" y="431.9" width="18.2" height="11.2" rx="2.2" fill="url(#gLay)" stroke="#2a70aa" stroke-width="1.8"/><rect x="76.5" y="435.8" width="15" height="2.6" fill="#a4a8ae"/><rect x="82.8" y="443.5" width="2.4" height="3.5" fill="#1e5a92"/><rect x="80.5" y="446.2" width="7" height="1.8" fill="#1e5a92"/></g>
<text x="98" y="443" font-size="11.6" textLength="59.09" lengthAdjust="spacingAndGlyphs" clip-path="url(#cpLay)">Konno-Mead</text>
<g clip-path="url(#cpLay)" shape-rendering="auto"><rect x="74.9" y="451.9" width="18.2" height="11.2" rx="2.2" fill="url(#gLay)" stroke="#2a70aa" stroke-width="1.8"/><rect x="76.5" y="455.8" width="15" height="2.6" fill="#a4a8ae"/><rect x="82.8" y="463.5" width="2.4" height="3.5" fill="#1e5a92"/><rect x="80.5" y="466.2" width="7" height="1.8" fill="#1e5a92"/></g>
<text x="98" y="463" font-size="11.6" textLength="57.95" lengthAdjust="spacingAndGlyphs" clip-path="url(#cpLay)">Phase Angle</text>
<g clip-path="url(#cpLay)"><rect x="34.0" y="475.0" width="9" height="9" rx="1" fill="#f4f4f4" stroke="#a8a8a8" shape-rendering="auto"/><rect x="36.5" y="479.0" width="5" height="1" fill="#2a3a7a"/></g>
<g clip-path="url(#cpLay)" shape-rendering="auto"><path d="M53.5 472 L58.5 471.5 L59.5 472.8 L71.5 471.3 L70.8 484 L54 488 Z" fill="#dce8f4" stroke="#7a7a7a" stroke-width="0.9"/><path d="M55.5 474.5 L70.8 472.8 L69.8 484.5 L54 488.5 Z" fill="url(#gFolder)" stroke="#5a6878" stroke-width="0.8"/></g>
<text x="75" y="483" font-size="11.6" textLength="62.32" lengthAdjust="spacingAndGlyphs" clip-path="url(#cpLay)">HRV Analysis</text>
<g clip-path="url(#cpLay)"><rect x="57.0" y="495.0" width="9" height="9" rx="1" fill="#f4f4f4" stroke="#a8a8a8" shape-rendering="auto"/><rect x="59.5" y="499.0" width="5" height="1" fill="#2a3a7a"/><rect x="61.5" y="497.0" width="1" height="5" fill="#2a3a7a"/></g>
<g clip-path="url(#cpLay)" shape-rendering="auto"><path d="M76.5 492 L81.5 491.5 L82.5 492.8 L94.5 491.3 L93.8 504 L77 508 Z" fill="#dce8f4" stroke="#7a7a7a" stroke-width="0.9"/><path d="M78.5 494.5 L93.8 492.8 L92.8 504.5 L77 508.5 Z" fill="url(#gFolder)" stroke="#5a6878" stroke-width="0.8"/></g>
<text x="98" y="503" font-size="11.6" textLength="41.87" lengthAdjust="spacingAndGlyphs" clip-path="url(#cpLay)">Dual Ecg</text>
<g clip-path="url(#cpLay)"><rect x="57.0" y="515.0" width="9" height="9" rx="1" fill="#f4f4f4" stroke="#a8a8a8" shape-rendering="auto"/><rect x="59.5" y="519.0" width="5" height="1" fill="#2a3a7a"/><rect x="61.5" y="517.0" width="1" height="5" fill="#2a3a7a"/></g>
<g clip-path="url(#cpLay)" shape-rendering="auto"><path d="M76.5 512 L81.5 511.5 L82.5 512.8 L94.5 511.3 L93.8 524 L77 528 Z" fill="#dce8f4" stroke="#7a7a7a" stroke-width="0.9"/><path d="M78.5 514.5 L93.8 512.8 L92.8 524.5 L77 528.5 Z" fill="url(#gFolder)" stroke="#5a6878" stroke-width="0.8"/></g>
<text x="98" y="523" font-size="11.6" textLength="49.33" lengthAdjust="spacingAndGlyphs" clip-path="url(#cpLay)">Single Ecg</text>
<g clip-path="url(#cpLay)" shape-rendering="auto"><rect x="74.9" y="531.9" width="18.2" height="11.2" rx="2.2" fill="url(#gLay)" stroke="#2a70aa" stroke-width="1.8"/><rect x="76.5" y="535.8" width="15" height="2.6" fill="#a4a8ae"/><rect x="82.8" y="543.5" width="2.4" height="3.5" fill="#1e5a92"/><rect x="80.5" y="546.2" width="7" height="1.8" fill="#1e5a92"/></g>
<text x="98" y="543" font-size="11.6" textLength="111.64" lengthAdjust="spacingAndGlyphs" clip-path="url(#cpLay)">HRV Frequency Domain</text>
<g clip-path="url(#cpLay)" shape-rendering="auto"><rect x="74.9" y="551.9" width="18.2" height="11.2" rx="2.2" fill="url(#gLay)" stroke="#2a70aa" stroke-width="1.8"/><rect x="76.5" y="555.8" width="15" height="2.6" fill="#a4a8ae"/><rect x="82.8" y="563.5" width="2.4" height="3.5" fill="#1e5a92"/><rect x="80.5" y="566.2" width="7" height="1.8" fill="#1e5a92"/></g>
<text x="98" y="563" font-size="11.6" textLength="111.64" lengthAdjust="spacingAndGlyphs" clip-path="url(#cpLay)">HRV Frequency Domain</text>
<g clip-path="url(#cpLay)" shape-rendering="auto"><rect x="74.9" y="571.9" width="18.2" height="11.2" rx="2.2" fill="url(#gLay)" stroke="#2a70aa" stroke-width="1.8"/><rect x="76.5" y="575.8" width="15" height="2.6" fill="#a4a8ae"/><rect x="82.8" y="583.5" width="2.4" height="3.5" fill="#1e5a92"/><rect x="80.5" y="586.2" width="7" height="1.8" fill="#1e5a92"/></g>
<text x="98" y="583" font-size="11.6" textLength="109.37" lengthAdjust="spacingAndGlyphs" clip-path="url(#cpLay)">HRV Nonlinear Regions</text>
<g clip-path="url(#cpLay)" shape-rendering="auto"><rect x="74.9" y="591.9" width="18.2" height="11.2" rx="2.2" fill="url(#gLay)" stroke="#2a70aa" stroke-width="1.8"/><rect x="76.5" y="595.8" width="15" height="2.6" fill="#a4a8ae"/><rect x="82.8" y="603.5" width="2.4" height="3.5" fill="#1e5a92"/><rect x="80.5" y="606.2" width="7" height="1.8" fill="#1e5a92"/></g>
<text x="98" y="603" font-size="11.6" textLength="103.05" lengthAdjust="spacingAndGlyphs" clip-path="url(#cpLay)">HRV Nonlinear Trends</text>
<g clip-path="url(#cpLay)" shape-rendering="auto"><rect x="74.9" y="611.9" width="18.2" height="11.2" rx="2.2" fill="url(#gLay)" stroke="#2a70aa" stroke-width="1.8"/><rect x="76.5" y="615.8" width="15" height="2.6" fill="#a4a8ae"/><rect x="82.8" y="623.5" width="2.4" height="3.5" fill="#1e5a92"/><rect x="80.5" y="626.2" width="7" height="1.8" fill="#1e5a92"/></g>
<text x="98" y="623" font-size="11.6" textLength="125.97" lengthAdjust="spacingAndGlyphs" clip-path="url(#cpLay)">HRV Time Domain Regions</text>
<g clip-path="url(#cpLay)" shape-rendering="auto"><rect x="74.9" y="631.9" width="18.2" height="11.2" rx="2.2" fill="url(#gLay)" stroke="#2a70aa" stroke-width="1.8"/><rect x="76.5" y="635.8" width="15" height="2.6" fill="#a4a8ae"/><rect x="82.8" y="643.5" width="2.4" height="3.5" fill="#1e5a92"/><rect x="80.5" y="646.2" width="7" height="1.8" fill="#1e5a92"/></g>
<text x="98" y="643" font-size="11.6" textLength="119.64" lengthAdjust="spacingAndGlyphs" clip-path="url(#cpLay)">HRV Time Domain Trends</text>
<g clip-path="url(#cpLay)" shape-rendering="auto"><rect x="74.9" y="651.9" width="18.2" height="11.2" rx="2.2" fill="url(#gLay)" stroke="#2a70aa" stroke-width="1.8"/><rect x="76.5" y="655.8" width="15" height="2.6" fill="#a4a8ae"/><rect x="82.8" y="663.5" width="2.4" height="3.5" fill="#1e5a92"/><rect x="80.5" y="666.2" width="7" height="1.8" fill="#1e5a92"/></g>
<text x="98" y="663" font-size="11.6" textLength="96.35" lengthAdjust="spacingAndGlyphs" clip-path="url(#cpLay)">Power Spectrum and</text>
<g clip-path="url(#cpLay)" shape-rendering="auto"><rect x="74.9" y="671.9" width="18.2" height="11.2" rx="2.2" fill="url(#gLay)" stroke="#2a70aa" stroke-width="1.8"/><rect x="76.5" y="675.8" width="15" height="2.6" fill="#a4a8ae"/><rect x="82.8" y="683.5" width="2.4" height="3.5" fill="#1e5a92"/><rect x="80.5" y="686.2" width="7" height="1.8" fill="#1e5a92"/></g>
<text x="98" y="683" font-size="11.6" textLength="61.37" lengthAdjust="spacingAndGlyphs" clip-path="url(#cpLay)">RSA Regions</text>
<g clip-path="url(#cpLay)" shape-rendering="auto"><rect x="74.9" y="691.9" width="18.2" height="11.2" rx="2.2" fill="url(#gLay)" stroke="#2a70aa" stroke-width="1.8"/><rect x="76.5" y="695.8" width="15" height="2.6" fill="#a4a8ae"/><rect x="82.8" y="703.5" width="2.4" height="3.5" fill="#1e5a92"/><rect x="80.5" y="706.2" width="7" height="1.8" fill="#1e5a92"/></g>
<text x="98" y="703" font-size="11.6" textLength="55.05" lengthAdjust="spacingAndGlyphs" clip-path="url(#cpLay)">RSA Trends</text>
<rect x="193" y="428" width="17" height="270" fill="#eaeaea" />
<rect x="194" y="497" width="15" height="108" fill="url(#gThumbV)" rx="1.5"/>
<rect x="194.5" y="497.5" width="14" height="107" rx="1.5" fill="none" stroke="#9a9a9a" shape-rendering="auto"/>
<rect x="198" y="549" width="7" height="1" fill="#6a6a6a" />
<rect x="198" y="551" width="7" height="1" fill="#6a6a6a" />
<rect x="198" y="553" width="7" height="1" fill="#6a6a6a" />
<path d="M198 440.5 l3.5 -4 l3.5 4z" fill="#505050" shape-rendering="auto"/>
<path d="M198 688 l3.5 4 l3.5 -4z" fill="#505050" shape-rendering="auto"/>
<rect x="2" y="698" width="191" height="17" fill="#eaeaea" />
<rect x="20.5" y="699.5" width="116" height="14" rx="1.5" fill="url(#gThumbH)" stroke="#9a9a9a" shape-rendering="auto"/>
<rect x="76" y="703" width="1" height="7" fill="#6a6a6a" />
<rect x="78" y="703" width="1" height="7" fill="#6a6a6a" />
<rect x="80" y="703" width="1" height="7" fill="#6a6a6a" />
<path d="M12 703.0 l-4 3.5 l4 3.5z" fill="#505050" shape-rendering="auto"/>
<path d="M183 703.0 l4 3.5 l-4 3.5z" fill="#505050" shape-rendering="auto"/>
<rect x="193" y="698" width="18" height="17" fill="#eaeaea" />
<defs><linearGradient id="gTabIn" x1="0" y1="0" x2="0" y2="1"><stop offset="0" stop-color="#f2f2f2"/><stop offset="1" stop-color="#dadada"/></linearGradient><linearGradient id="gLTool" x1="0" y1="0" x2="0" y2="1"><stop offset="0" stop-color="#ffffff"/><stop offset="1" stop-color="#f1f1f1"/></linearGradient><linearGradient id="gDrop" x1="0" y1="0" x2="0" y2="1"><stop offset="0" stop-color="#f2f2f2"/><stop offset="0.5" stop-color="#e4e4e4"/><stop offset="0.5" stop-color="#d8d8d8"/><stop offset="1" stop-color="#cfcfcf"/></linearGradient></defs>
<rect x="216" y="74" width="1087" height="644" fill="#f0f0f0" />
<rect x="216" y="74" width="1087" height="1" fill="#a0a0a0" />
<rect x="216" y="717" width="1087" height="1" fill="#a0a0a0" />
<rect x="216" y="74" width="1" height="644" fill="#a0a0a0" />
<rect x="1302" y="74" width="1" height="644" fill="#a0a0a0" />
<rect x="217" y="75" width="1085" height="22" fill="#f0f0f0" />
<rect x="217" y="97" width="1085" height="1" fill="#898c95" />
<g shape-rendering="auto">
<path d="M223.5 97.5 L241 79.5 Q242 78.5 244 78.5 L422 78.5 L425 81.5 L425 97.5 Z" fill="url(#gTabIn)" stroke="#8e8e8e"/>
<path d="M416.5 98 L435.5 79 Q436.5 78.5 438.5 78.5 L557.5 78.5 Q561.5 78.5 561.5 82 L561.5 98 Z" fill="#fcfcfc" stroke="#8e8e8e"/>
</g>
<rect x="417" y="97" width="144" height="2" fill="#fcfcfc" />
<text x="247" y="91" font-size="12" textLength="164.6" lengthAdjust="spacingAndGlyphs" >BR - Sample Session.bcr001.vsn</text>
<text x="436.6" y="91" font-size="12" font-weight="bold" textLength="117.7" lengthAdjust="spacingAndGlyphs" >EMG2Chanels.bcr.vsn</text>
<path d="M1268 86 h9 l-4.5 4.5z" fill="#000" shape-rendering="auto"/>
<path d="M1285.5 83.5 L1293.8 91 M1293.8 83.5 L1285.5 91" stroke="#000" stroke-width="1.7" shape-rendering="auto"/>
<rect x="217" y="98" width="1085" height="27" fill="url(#gLTool)" />
<rect x="220" y="103" width="2" height="2" fill="#a8a8a8" />
<rect x="220" y="107" width="2" height="2" fill="#a8a8a8" />
<rect x="220" y="111" width="2" height="2" fill="#a8a8a8" />
<rect x="220" y="115" width="2" height="2" fill="#a8a8a8" />
<text x="229.5" y="116" font-size="12" font-weight="bold" textLength="100.91" lengthAdjust="spacingAndGlyphs" >Layout Start Time:</text>
<rect x="335.5" y="100.5" width="81.5" height="21.5" rx="2" fill="#fff" stroke="#d6d6d6" shape-rendering="auto"/>
<text x="339" y="115" font-size="12" font-weight="bold" textLength="70.66" lengthAdjust="spacingAndGlyphs" >17:07:10.283</text>
<text x="421.5" y="116" font-size="12" font-weight="bold" textLength="51.46" lengthAdjust="spacingAndGlyphs" >Duration:</text>
<rect x="477.5" y="100.5" width="99" height="21.5" rx="2" fill="#fff" stroke="#b4b4b4" shape-rendering="auto"/>
<rect x="558.5" y="101" width="17.5" height="21" rx="1" fill="url(#gDrop)" stroke="#b8b8b8" stroke-width="0.8" shape-rendering="auto"/>
<path d="M563 110 h8 l-4 4z" fill="#000" shape-rendering="auto"/>
<text x="481" y="115" font-size="12" font-weight="bold" textLength="70.3" lengthAdjust="spacingAndGlyphs" >00:00:10.800</text>
<text x="1031" y="116" font-size="12" font-weight="bold" textLength="154.98" lengthAdjust="spacingAndGlyphs" >Session Start Time: 17:07:07</text>
<text x="1195" y="116" font-size="12" font-weight="bold" textLength="102.91" lengthAdjust="spacingAndGlyphs" >Duration: 00:00:30</text>
<rect x="217" y="125" width="954" height="32" fill="#a0a0a0" />
<rect x="217" y="125" width="954" height="1" fill="#6d6d6d" />
<rect x="217" y="156" width="954" height="1" fill="#6d6d6d" />
<rect x="217" y="125" width="1" height="32" fill="#6d6d6d" />
<rect x="1170" y="125" width="1" height="32" fill="#6d6d6d" />
<rect x="218" y="126" width="952" height="1" fill="#8a8a8a" />
<rect x="302" y="130" width="803" height="22" fill="#e3e3e3" />
<rect x="1174" y="125" width="129" height="32" fill="#e4e4e4" />
<rect x="1174" y="125" width="129" height="1" fill="#6d6d6d" />
<rect x="1174" y="156" width="129" height="1" fill="#6d6d6d" />
<rect x="1174" y="125" width="1" height="32" fill="#6d6d6d" />
<rect x="1302" y="125" width="1" height="32" fill="#6d6d6d" />
<g shape-rendering="auto"><rect x="1179" y="130" width="24" height="22" fill="#fff"/><path d="M1184 136 q7 -6 14 0 M1182 133 q9 -8 18 0 M1186 139 q5 -4 10 0" stroke="#a8a0d8" fill="none" stroke-width="0.8"/><path d="M1179.5 143.5 h6 l2 -2 l2.5 -8 l3 17 l2.5 -7 h7.5" stroke="#2e7fb0" fill="none" stroke-width="1.6"/></g>
<text x="1207" y="145.6" font-size="12" textLength="46.27" lengthAdjust="spacingAndGlyphs" >BioRadio</text>
<rect x="217" y="157" width="1085" height="520" fill="#ffffff" />
<rect x="217" y="677" width="1085" height="16" fill="#ebebeb" />
<rect x="217" y="677" width="1085" height="1" fill="#e2e2e2" />
<rect x="334.5" y="677.5" width="359" height="14" rx="2" fill="url(#gThumbH)" stroke="#9a9a9a" shape-rendering="auto"/>
<rect x="511" y="681" width="1" height="7" fill="#6a6a6a" />
<rect x="513" y="681" width="1" height="7" fill="#6a6a6a" />
<rect x="515" y="681" width="1" height="7" fill="#6a6a6a" />
<path d="M229 681 l-4 3.5 l4 3.5z" fill="#505050" shape-rendering="auto"/><path d="M1291 681 l4 3.5 l-4 3.5z" fill="#505050" shape-rendering="auto"/>
<rect x="217" y="693" width="1085" height="24" fill="#efebea" />
<rect x="217" y="693" width="1085" height="1" fill="#a0a0a0" />
<rect x="217" y="694" width="1085" height="1" fill="#ffffff" />
<rect x="218" y="696" width="116" height="17" fill="#ffffff" />
<rect x="218" y="696" width="116" height="1" fill="#a0a0a0" />
<rect x="218" y="696" width="1" height="17" fill="#a0a0a0" />
<rect x="333" y="696" width="1" height="17" fill="#a0a0a0" />
<rect x="335" y="696" width="120" height="17" fill="#ffffff" />
<rect x="335" y="696" width="120" height="1" fill="#a0a0a0" />
<rect x="335" y="696" width="1" height="17" fill="#a0a0a0" />
<rect x="454" y="696" width="1" height="17" fill="#a0a0a0" />
<text x="223.5" y="709.5" font-size="12" font-weight="bold" textLength="104.89" lengthAdjust="spacingAndGlyphs" >Time: 17:07:10.431</text>
<text x="340.5" y="709.5" font-size="12" font-weight="bold" textLength="107.08" lengthAdjust="spacingAndGlyphs" >Cursor: 0.05979382</text>
<rect x="1" y="719" width="1302" height="3" fill="#f0f0f0" />
<rect x="1" y="722" width="1302" height="18" fill="#d6e2ef" />
<rect x="1" y="740" width="1302" height="1" fill="#a0a0a0" />
<rect x="1" y="741" width="1302" height="4" fill="#f4f4f4" />
<text x="6.5" y="736" font-size="12" textLength="82.37" lengthAdjust="spacingAndGlyphs" >Export Manager</text>
<g shape-rendering="crispEdges"><rect x="1274" y="726" width="6" height="1" fill="#000"/><rect x="1275" y="727" width="1" height="5" fill="#000"/><rect x="1278" y="727" width="2" height="5" fill="#000"/><rect x="1273" y="732" width="8" height="1" fill="#000"/><rect x="1276" y="733" width="1" height="4" fill="#000"/></g>
<path d="M1289 727 L1297 735 M1297 727 L1289 735" stroke="#000" stroke-width="1.6" shape-rendering="auto"/>
<rect x="221" y="161" width="18" height="109" fill="#98b0d0" />
<text transform="translate(233.8 216.3) rotate(-90)" font-size="12" text-anchor="middle" fill="#1a1a1a" textLength="31.5" lengthAdjust="spacingAndGlyphs">Chart1</text>
<text transform="translate(254.2 216.5) rotate(-90)" font-size="12" text-anchor="middle" fill="#1a1a1a" textLength="14.7" lengthAdjust="spacingAndGlyphs">mV</text>
<rect x="295" y="167" width="6" height="1" fill="#000" />
<rect x="1106" y="167" width="6" height="1" fill="#000" />
<text x="291.5" y="171" font-size="12" fill="#111" textLength="5.9" lengthAdjust="spacingAndGlyphs" text-anchor="end" >1</text>
<text x="1113.5" y="171" font-size="12" fill="#111" textLength="5.9" lengthAdjust="spacingAndGlyphs" >1</text>
<rect x="295" y="207" width="6" height="1" fill="#000" />
<rect x="1106" y="207" width="6" height="1" fill="#000" />
<text x="291.5" y="211" font-size="12" fill="#111" textLength="5.9" lengthAdjust="spacingAndGlyphs" text-anchor="end" >0</text>
<text x="1113.5" y="211" font-size="12" fill="#111" textLength="5.9" lengthAdjust="spacingAndGlyphs" >0</text>
<rect x="295" y="247" width="6" height="1" fill="#000" />
<rect x="1106" y="247" width="6" height="1" fill="#000" />
<text x="291.5" y="251" font-size="12" fill="#111" textLength="9.5" lengthAdjust="spacingAndGlyphs" text-anchor="end" >-1</text>
<text x="1113.5" y="251" font-size="12" fill="#111" textLength="9.5" lengthAdjust="spacingAndGlyphs" >-1</text>
<rect x="295" y="263" width="6" height="1" fill="#000" />
<rect x="1106" y="263" width="6" height="1" fill="#000" />
<text x="291.5" y="267" font-size="12" fill="#111" textLength="18.4" lengthAdjust="spacingAndGlyphs" text-anchor="end" >-1.4</text>
<text x="1113.5" y="267" font-size="12" fill="#111" textLength="18.4" lengthAdjust="spacingAndGlyphs" >-1.4</text>
<rect x="312" y="167" width="1" height="97" fill="#000" />
<rect x="221" y="278" width="18" height="109" fill="#98b0d0" />
<text transform="translate(233.8 333.3) rotate(-90)" font-size="12" text-anchor="middle" fill="#1a1a1a" textLength="31.5" lengthAdjust="spacingAndGlyphs">Chart3</text>
<text transform="translate(254.2 333.5) rotate(-90)" font-size="12" text-anchor="middle" fill="#1a1a1a" textLength="24" lengthAdjust="spacingAndGlyphs">mV²/t</text>
<rect x="295" y="284" width="6" height="1" fill="#000" />
<rect x="1106" y="284" width="6" height="1" fill="#000" />
<text x="291.5" y="288" font-size="12" fill="#111" textLength="20.8" lengthAdjust="spacingAndGlyphs" text-anchor="end" >0.14</text>
<text x="1113.5" y="288" font-size="12" fill="#111" textLength="20.8" lengthAdjust="spacingAndGlyphs" >0.14</text>
<rect x="295" y="311" width="6" height="1" fill="#000" />
<rect x="1106" y="311" width="6" height="1" fill="#000" />
<text x="291.5" y="315" font-size="12" fill="#111" textLength="14.8" lengthAdjust="spacingAndGlyphs" text-anchor="end" >0.1</text>
<text x="1113.5" y="315" font-size="12" fill="#111" textLength="14.8" lengthAdjust="spacingAndGlyphs" >0.1</text>
<rect x="295" y="346" width="6" height="1" fill="#000" />
<rect x="1106" y="346" width="6" height="1" fill="#000" />
<text x="291.5" y="350" font-size="12" fill="#111" textLength="20.8" lengthAdjust="spacingAndGlyphs" text-anchor="end" >0.05</text>
<text x="1113.5" y="350" font-size="12" fill="#111" textLength="20.8" lengthAdjust="spacingAndGlyphs" >0.05</text>
<rect x="295" y="380" width="6" height="1" fill="#000" />
<rect x="1106" y="380" width="6" height="1" fill="#000" />
<text x="291.5" y="384" font-size="12" fill="#111" textLength="5.9" lengthAdjust="spacingAndGlyphs" text-anchor="end" >0</text>
<text x="1113.5" y="384" font-size="12" fill="#111" textLength="5.9" lengthAdjust="spacingAndGlyphs" >0</text>
<rect x="312" y="284" width="1" height="97" fill="#000" />
<rect x="221" y="395" width="18" height="109" fill="#98b0d0" />
<text transform="translate(233.8 450.3) rotate(-90)" font-size="12" text-anchor="middle" fill="#1a1a1a" textLength="31.5" lengthAdjust="spacingAndGlyphs">Chart2</text>
<text transform="translate(254.2 450.5) rotate(-90)" font-size="12" text-anchor="middle" fill="#1a1a1a" textLength="14.7" lengthAdjust="spacingAndGlyphs">mV</text>
<rect x="295" y="401" width="6" height="1" fill="#000" />
<rect x="1106" y="401" width="6" height="1" fill="#000" />
<text x="291.5" y="405" font-size="12" fill="#111" textLength="14.8" lengthAdjust="spacingAndGlyphs" text-anchor="end" >1.3</text>
<text x="1113.5" y="405" font-size="12" fill="#111" textLength="14.8" lengthAdjust="spacingAndGlyphs" >1.3</text>
<rect x="295" y="413" width="6" height="1" fill="#000" />
<rect x="1106" y="413" width="6" height="1" fill="#000" />
<rect x="295" y="451" width="6" height="1" fill="#000" />
<rect x="1106" y="451" width="6" height="1" fill="#000" />
<text x="291.5" y="455" font-size="12" fill="#111" textLength="5.9" lengthAdjust="spacingAndGlyphs" text-anchor="end" >0</text>
<text x="1113.5" y="455" font-size="12" fill="#111" textLength="5.9" lengthAdjust="spacingAndGlyphs" >0</text>
<rect x="295" y="489" width="6" height="1" fill="#000" />
<rect x="1106" y="489" width="6" height="1" fill="#000" />
<rect x="295" y="497" width="6" height="1" fill="#000" />
<rect x="1106" y="497" width="6" height="1" fill="#000" />
<text x="291.5" y="501" font-size="12" fill="#111" textLength="18.4" lengthAdjust="spacingAndGlyphs" text-anchor="end" >-1.2</text>
<text x="1113.5" y="501" font-size="12" fill="#111" textLength="18.4" lengthAdjust="spacingAndGlyphs" >-1.2</text>
<rect x="312" y="401" width="1" height="97" fill="#000" />
<rect x="221" y="512" width="18" height="160" fill="#98b0d0" />
<text transform="translate(233.8 592.8) rotate(-90)" font-size="12" text-anchor="middle" fill="#1a1a1a" textLength="31.5" lengthAdjust="spacingAndGlyphs">Chart4</text>
<text transform="translate(254.2 581.0) rotate(-90)" font-size="12" text-anchor="middle" fill="#1a1a1a" textLength="24" lengthAdjust="spacingAndGlyphs">mV²/t</text>
<rect x="295" y="518" width="6" height="1" fill="#000" />
<rect x="1106" y="518" width="6" height="1" fill="#000" />
<text x="291.5" y="522" font-size="12" fill="#111" textLength="20.8" lengthAdjust="spacingAndGlyphs" text-anchor="end" >0.17</text>
<text x="1113.5" y="522" font-size="12" fill="#111" textLength="20.8" lengthAdjust="spacingAndGlyphs" >0.17</text>
<rect x="295" y="532" width="6" height="1" fill="#000" />
<rect x="1106" y="532" width="6" height="1" fill="#000" />
<text x="291.5" y="536" font-size="12" fill="#111" textLength="20.8" lengthAdjust="spacingAndGlyphs" text-anchor="end" >0.15</text>
<text x="1113.5" y="536" font-size="12" fill="#111" textLength="20.8" lengthAdjust="spacingAndGlyphs" >0.15</text>
<rect x="295" y="569" width="6" height="1" fill="#000" />
<rect x="1106" y="569" width="6" height="1" fill="#000" />
<text x="291.5" y="573" font-size="12" fill="#111" textLength="14.8" lengthAdjust="spacingAndGlyphs" text-anchor="end" >0.1</text>
<text x="1113.5" y="573" font-size="12" fill="#111" textLength="14.8" lengthAdjust="spacingAndGlyphs" >0.1</text>
<rect x="295" y="605" width="6" height="1" fill="#000" />
<rect x="1106" y="605" width="6" height="1" fill="#000" />
<text x="291.5" y="609" font-size="12" fill="#111" textLength="20.8" lengthAdjust="spacingAndGlyphs" text-anchor="end" >0.05</text>
<text x="1113.5" y="609" font-size="12" fill="#111" textLength="20.8" lengthAdjust="spacingAndGlyphs" >0.05</text>
<rect x="295" y="641" width="6" height="1" fill="#000" />
<rect x="1106" y="641" width="6" height="1" fill="#000" />
<text x="291.5" y="645" font-size="12" fill="#111" textLength="5.9" lengthAdjust="spacingAndGlyphs" text-anchor="end" >0</text>
<text x="1113.5" y="645" font-size="12" fill="#111" textLength="5.9" lengthAdjust="spacingAndGlyphs" >0</text>
<rect x="312" y="518" width="1" height="124" fill="#000" />
<rect x="301" y="641" width="1" height="7" fill="#000" />
<text x="300" y="660" font-size="12" fill="#111" textLength="62.0" lengthAdjust="spacingAndGlyphs" text-anchor="middle" >17:07:10.283</text>
<rect x="429" y="642" width="1" height="6" fill="#000" />
<text x="428" y="660" font-size="12" fill="#111" textLength="62.0" lengthAdjust="spacingAndGlyphs" text-anchor="middle" >17:07:12.000</text>
<rect x="578" y="642" width="1" height="6" fill="#000" />
<text x="577" y="660" font-size="12" fill="#111" textLength="62.0" lengthAdjust="spacingAndGlyphs" text-anchor="middle" >17:07:14.000</text>
<rect x="727" y="642" width="1" height="6" fill="#000" />
<text x="726" y="660" font-size="12" fill="#111" textLength="62.0" lengthAdjust="spacingAndGlyphs" text-anchor="middle" >17:07:16.000</text>
<rect x="875" y="642" width="1" height="6" fill="#000" />
<text x="874" y="660" font-size="12" fill="#111" textLength="62.0" lengthAdjust="spacingAndGlyphs" text-anchor="middle" >17:07:18.000</text>
<rect x="1024" y="642" width="1" height="6" fill="#000" />
<text x="1023" y="660" font-size="12" fill="#111" textLength="62.0" lengthAdjust="spacingAndGlyphs" text-anchor="middle" >17:07:20.000</text>
<rect x="1105" y="641" width="1" height="7" fill="#000" />
<text x="1104" y="660" font-size="12" fill="#111" textLength="62.0" lengthAdjust="spacingAndGlyphs" text-anchor="middle" >17:07:21.083</text>
<g shape-rendering="crispEdges">
<path d="M301 380.5 H303 V376.5 H377 V287.5 H452 V346.5 H526 V379.5 H675 V380.5 H749 V293.5 H824 V302.5 H898 V377.5 H973 V379.5 H1105" stroke="#a83434" stroke-width="1" fill="none"/>
<path d="M301 640.5 H303 V635.5 H377 V637.5 H526 V564.5 H601 V523.5 H675 V622.5 H749 V638.5 H824 V640.5 H898 V634.5 H973 V542.5 H1047 V600.5 H1105" stroke="#a83434" stroke-width="1" fill="none"/>
</g>
<path d="M302.5 207V208M303.5 207V208M304.5 207V208M305.5 207V208M306.5 207V208M307.5 207V208M308.5 207V208M309.5 207V208M310.5 207V208M311.5 207V208M312.5 207V209M313.5 207V208M314.5 206V208M315.5 207V208M316.5 207V208M317.5 207V208M318.5 207V208M319.5 207V209M320.5 207V208M321.5 207V208M322.5 207V208M323.5 207V208M324.5 207V208M325.5 206V208M326.5 207V208M327.5 207V208M328.5 207V208M329.5 207V208M330.5 207V208M331.5 207V208M332.5 207V208M333.5 207V208M334.5 207V208M335.5 207V209M336.5 207V208M337.5 207V208M338.5 207V209M339.5 207V208M340.5 206V208M341.5 207V208M342.5 207V208M343.5 207V208M344.5 207V208M345.5 207V208M346.5 207V208M347.5 207V208M348.5 207V208M349.5 206V208M350.5 207V208M351.5 206V208M352.5 207V208M353.5 207V209M354.5 206V208M355.5 207V208M356.5 207V208M357.5 207V208M358.5 207V208M359.5 207V208M360.5 207V208M361.5 207V209M362.5 207V208M363.5 206V209M364.5 203V210M365.5 206V210M366.5 205V210M367.5 204V212M368.5 205V209M369.5 205V214M370.5 203V213M371.5 201V216M372.5 200V211M373.5 200V222M374.5 200V210M375.5 197V210M376.5 193V217M377.5 202V211M378.5 199V214M379.5 194V220M380.5 200V211M381.5 202V216M382.5 204V214M383.5 201V219M384.5 196V216M385.5 196V219M386.5 191V222M387.5 197V228M388.5 198V214M389.5 199V216M390.5 189V222M391.5 197V231M392.5 194V232M393.5 186V212M394.5 202V215M395.5 191V216M396.5 200V219M397.5 198V214M398.5 184V217M399.5 190V252M400.5 199V219M401.5 196V217M402.5 177V215M403.5 192V225M404.5 168V213M405.5 185V223M406.5 181V227M407.5 167V233M408.5 192V239M409.5 191V226M410.5 197V222M411.5 190V247M412.5 196V242M413.5 202V222M414.5 198V224M415.5 189V221M416.5 166V230M417.5 187V221M418.5 196V216M419.5 185V213M420.5 189V220M421.5 198V231M422.5 176V223M423.5 191V230M424.5 203V216M425.5 178V225M426.5 193V214M427.5 200V226M428.5 198V216M429.5 202V216M430.5 186V219M431.5 192V218M432.5 173V213M433.5 184V229M434.5 197V219M435.5 189V221M436.5 203V245M437.5 199V213M438.5 199V216M439.5 188V221M440.5 194V221M441.5 202V238M442.5 197V227M443.5 195V216M444.5 184V239M445.5 203V237M446.5 185V225M447.5 192V217M448.5 203V216M449.5 195V216M450.5 202V218M451.5 200V216M452.5 181V224M453.5 200V220M454.5 183V221M455.5 197V219M456.5 199V224M457.5 196V223M458.5 169V217M459.5 179V223M460.5 191V217M461.5 189V220M462.5 200V216M463.5 203V219M464.5 202V222M465.5 198V222M466.5 198V233M467.5 194V229M468.5 184V228M469.5 199V229M470.5 194V224M471.5 200V217M472.5 200V212M473.5 194V224M474.5 192V214M475.5 199V215M476.5 201V223M477.5 203V216M478.5 189V216M479.5 190V223M480.5 195V214M481.5 190V216M482.5 198V211M483.5 204V212M484.5 201V223M485.5 201V216M486.5 194V212M487.5 200V229M488.5 197V222M489.5 204V214M490.5 196V213M491.5 203V217M492.5 203V214M493.5 199V219M494.5 201V212M495.5 201V215M496.5 195V212M497.5 202V210M498.5 197V211M499.5 205V212M500.5 205V209M501.5 206V209M502.5 207V208M503.5 207V208M504.5 207V208M505.5 207V208M506.5 207V208M507.5 207V208M508.5 207V208M509.5 207V208M510.5 207V208M511.5 207V208M512.5 207V209M513.5 207V209M514.5 207V208M515.5 207V208M516.5 207V208M517.5 207V209M518.5 207V208M519.5 207V208M520.5 207V209M521.5 207V208M522.5 207V208M523.5 207V208M524.5 206V208M525.5 207V208M526.5 207V208M527.5 207V208M528.5 207V208M529.5 207V208M530.5 207V208M531.5 207V208M532.5 207V208M533.5 207V209M534.5 207V208M535.5 206V208M536.5 206V208M537.5 207V209M538.5 206V208M539.5 207V209M540.5 207V209M541.5 207V208M542.5 207V208M543.5 207V208M544.5 207V208M545.5 207V208M546.5 207V208M547.5 207V209M548.5 207V208M549.5 207V208M550.5 207V208M551.5 207V208M552.5 207V209M553.5 207V208M554.5 207V208M555.5 207V208M556.5 207V208M557.5 207V208M558.5 206V210M559.5 206V208M560.5 205V209M561.5 206V211M562.5 205V209M563.5 204V210M564.5 206V209M565.5 205V209M566.5 206V210M567.5 206V209M568.5 205V210M569.5 206V209M570.5 204V209M571.5 204V209M572.5 206V209M573.5 206V209M574.5 206V211M575.5 206V209M576.5 206V209M577.5 205V209M578.5 205V210M579.5 205V209M580.5 205V210M581.5 206V210M582.5 206V210M583.5 205V209M584.5 206V209M585.5 207V209M586.5 204V210M587.5 206V209M588.5 206V211M589.5 206V209M590.5 206V210M591.5 207V209M592.5 205V209M593.5 205V210M594.5 206V209M595.5 206V210M596.5 206V210M597.5 206V209M598.5 205V212M599.5 206V209M600.5 204V209M601.5 205V209M602.5 206V209M603.5 206V210M604.5 206V209M605.5 206V209M606.5 204V209M607.5 205V209M608.5 205V209M609.5 205V209M610.5 206V210M611.5 204V211M612.5 204V209M613.5 205V209M614.5 206V209M615.5 206V210M616.5 206V209M617.5 204V209M618.5 206V210M619.5 205V210M620.5 206V209M621.5 206V210M622.5 206V209M623.5 205V209M624.5 206V209M625.5 206V210M626.5 206V209M627.5 204V209M628.5 205V210M629.5 204V209M630.5 207V211M631.5 206V211M632.5 205V209M633.5 206V209M634.5 204V209M635.5 206V209M636.5 206V209M637.5 205V209M638.5 206V211M639.5 206V209M640.5 206V209M641.5 206V210M642.5 205V209M643.5 206V209M644.5 206V209M645.5 206V209M646.5 206V209M647.5 206V209M648.5 206V209M649.5 202V209M650.5 205V209M651.5 205V209M652.5 206V211M653.5 204V209M654.5 206V209M655.5 205V210M656.5 206V211M657.5 206V211M658.5 206V211M659.5 204V210M660.5 204V211M661.5 206V209M662.5 205V210M663.5 206V209M664.5 206V209M665.5 206V209M666.5 204V210M667.5 206V210M668.5 206V209M669.5 205V209M670.5 205V210M671.5 205V211M672.5 204V212M673.5 205V210M674.5 205V210M675.5 206V209M676.5 205V209M677.5 206V210M678.5 205V209M679.5 204V210M680.5 205V209M681.5 206V208M682.5 207V208M683.5 207V209M684.5 207V208M685.5 207V208M686.5 207V208M687.5 207V208M688.5 206V208M689.5 206V208M690.5 207V209M691.5 207V208M692.5 206V208M693.5 207V208M694.5 207V208M695.5 207V208M696.5 207V208M697.5 207V208M698.5 207V209M699.5 207V208M700.5 207V208M701.5 207V208M702.5 207V209M703.5 207V208M704.5 207V208M705.5 206V208M706.5 207V208M707.5 206V208M708.5 207V208M709.5 207V209M710.5 207V209M711.5 207V208M712.5 207V208M713.5 207V208M714.5 207V208M715.5 207V209M716.5 206V208M717.5 207V208M718.5 207V208M719.5 207V208M720.5 207V208M721.5 207V208M722.5 207V208M723.5 206V208M724.5 207V208M725.5 206V208M726.5 207V209M727.5 207V208M728.5 207V208M729.5 206V208M730.5 207V208M731.5 207V208M732.5 207V209M733.5 207V208M734.5 207V208M735.5 206V208M736.5 207V208M737.5 207V209M738.5 207V208M739.5 207V208M740.5 207V208M741.5 207V208M742.5 207V208M743.5 206V208M744.5 207V208M745.5 207V208M746.5 207V208M747.5 207V208M748.5 207V209M749.5 206V208M750.5 207V208M751.5 207V208M752.5 207V208M753.5 207V208M754.5 207V208M755.5 207V208M756.5 207V208M757.5 206V208M758.5 207V208M759.5 207V208M760.5 207V208M761.5 206V210M762.5 206V210M763.5 206V211M764.5 206V209M765.5 206V210M766.5 206V210M767.5 205V210M768.5 204V211M769.5 203V213M770.5 201V211M771.5 206V212M772.5 203V210M773.5 205V216M774.5 205V210M775.5 204V210M776.5 205V210M777.5 201V210M778.5 202V215M779.5 203V210M780.5 203V209M781.5 203V210M782.5 199V211M783.5 201V217M784.5 192V214M785.5 197V211M786.5 197V217M787.5 186V213M788.5 189V225M789.5 200V220M790.5 204V211M791.5 186V214M792.5 203V213M793.5 193V218M794.5 196V214M795.5 198V247M796.5 199V219M797.5 195V213M798.5 202V221M799.5 167V229M800.5 202V220M801.5 192V213M802.5 192V213M803.5 201V222M804.5 200V227M805.5 202V214M806.5 180V222M807.5 182V232M808.5 197V248M809.5 201V218M810.5 199V240M811.5 196V218M812.5 199V222M813.5 200V217M814.5 185V220M815.5 196V216M816.5 174V239M817.5 196V225M818.5 190V214M819.5 195V214M820.5 183V215M821.5 199V218M822.5 194V213M823.5 195V237M824.5 194V215M825.5 186V215M826.5 191V223M827.5 192V215M828.5 181V222M829.5 168V214M830.5 201V221M831.5 193V216M832.5 194V225M833.5 175V213M834.5 187V220M835.5 189V213M836.5 200V225M837.5 200V236M838.5 167V254M839.5 189V217M840.5 195V225M841.5 198V235M842.5 187V221M843.5 195V232M844.5 200V239M845.5 191V229M846.5 188V261M847.5 178V233M848.5 196V228M849.5 199V216M850.5 190V226M851.5 180V223M852.5 182V218M853.5 201V227M854.5 194V213M855.5 194V224M856.5 183V221M857.5 185V229M858.5 201V223M859.5 196V221M860.5 204V218M861.5 202V215M862.5 181V215M863.5 198V215M864.5 197V218M865.5 192V215M866.5 204V222M867.5 199V224M868.5 198V213M869.5 199V223M870.5 197V213M871.5 190V215M872.5 203V221M873.5 197V214M874.5 199V218M875.5 204V213M876.5 203V210M877.5 194V219M878.5 201V212M879.5 204V213M880.5 201V212M881.5 203V217M882.5 200V212M883.5 202V212M884.5 196V211M885.5 195V217M886.5 202V216M887.5 199V212M888.5 204V212M889.5 202V219M890.5 205V213M891.5 195V217M892.5 201V211M893.5 201V213M894.5 206V215M895.5 201V211M896.5 205V213M897.5 205V214M898.5 203V214M899.5 204V215M900.5 203V212M901.5 198V213M902.5 203V210M903.5 204V212M904.5 205V209M905.5 204V211M906.5 206V211M907.5 205V214M908.5 206V210M909.5 205V213M910.5 205V210M911.5 201V211M912.5 204V209M913.5 202V214M914.5 202V211M915.5 205V211M916.5 203V212M917.5 206V211M918.5 204V210M919.5 206V209M920.5 206V208M921.5 207V208M922.5 207V208M923.5 206V208M924.5 207V208M925.5 207V208M926.5 207V208M927.5 207V208M928.5 206V208M929.5 207V208M930.5 207V208M931.5 207V209M932.5 207V208M933.5 207V209M934.5 207V208M935.5 207V208M936.5 207V209M937.5 207V208M938.5 207V208M939.5 207V208M940.5 207V208M941.5 207V208M942.5 207V209M943.5 207V208M944.5 207V208M945.5 207V208M946.5 207V208M947.5 207V208M948.5 207V208M949.5 207V208M950.5 207V208M951.5 207V208M952.5 207V208M953.5 207V208M954.5 207V208M955.5 207V208M956.5 206V208M957.5 206V208M958.5 207V208M959.5 207V208M960.5 207V208M961.5 206V208M962.5 207V209M963.5 207V208M964.5 207V208M965.5 207V208M966.5 207V208M967.5 207V209M968.5 207V208M969.5 207V208M970.5 207V208M971.5 207V209M972.5 207V208M973.5 206V208M974.5 206V209M975.5 205V209M976.5 206V211M977.5 206V210M978.5 205V209M979.5 206V209M980.5 205V209M981.5 205V209M982.5 206V209M983.5 206V210M984.5 204V211M985.5 205V209M986.5 206V210M987.5 206V211M988.5 205V210M989.5 206V211M990.5 206V210M991.5 206V209M992.5 204V209M993.5 204V209M994.5 205V209M995.5 206V208M996.5 206V209M997.5 205V210M998.5 205V212M999.5 206V209M1000.5 207V209M1001.5 205V209M1002.5 206V209M1003.5 205V209M1004.5 206V209M1005.5 205V209M1006.5 206V209M1007.5 206V209M1008.5 206V209M1009.5 203V209M1010.5 205V209M1011.5 206V210M1012.5 206V210M1013.5 205V211M1014.5 206V209M1015.5 206V209M1016.5 205V210M1017.5 205V209M1018.5 205V209M1019.5 205V210M1020.5 206V210M1021.5 206V209M1022.5 206V210M1023.5 205V211M1024.5 206V209M1025.5 206V209M1026.5 206V211M1027.5 206V210M1028.5 205V211M1029.5 206V209M1030.5 204V211M1031.5 205V210M1032.5 205V209M1033.5 206V209M1034.5 204V210M1035.5 204V209M1036.5 205V209M1037.5 206V210M1038.5 206V209M1039.5 205V209M1040.5 206V209M1041.5 204V210M1042.5 206V209M1043.5 205V209M1044.5 206V210M1045.5 206V209M1046.5 206V209M1047.5 206V209M1048.5 206V210M1049.5 206V209M1050.5 204V210M1051.5 206V209M1052.5 206V210M1053.5 206V209M1054.5 206V210M1055.5 206V209M1056.5 204V210M1057.5 206V210M1058.5 204V210M1059.5 206V209M1060.5 206V211M1061.5 206V210M1062.5 205V209M1063.5 206V211M1064.5 204V209M1065.5 206V211M1066.5 204V209M1067.5 204V210M1068.5 206V210M1069.5 205V210M1070.5 206V210M1071.5 205V209M1072.5 203V209M1073.5 205V209M1074.5 206V211M1075.5 204V209M1076.5 206V209M1077.5 205V209M1078.5 204V209M1079.5 206V210M1080.5 205V209M1081.5 204V209M1082.5 206V209M1083.5 206V209M1084.5 207V210M1085.5 206V209M1086.5 205V210M1087.5 206V210M1088.5 206V209M1089.5 204V210M1090.5 206V209M1091.5 206V210M1092.5 204V210M1093.5 206V209M1094.5 205V210M1095.5 206V209M1096.5 206V211M1097.5 206V211M1098.5 204V210M1099.5 204V209M1100.5 206V210M1101.5 206V209M1102.5 206V212M1103.5 205V211M1104.5 205V209M1105.5 206V209" stroke="#000080" stroke-width="1" fill="none" shape-rendering="crispEdges"/>
<path d="M302.5 450V453M303.5 450V453M304.5 450V453M305.5 449V453M306.5 449V454M307.5 450V452M308.5 450V453M309.5 450V454M310.5 450V452M311.5 450V453M312.5 450V453M313.5 451V454M314.5 451V453M315.5 449V453M316.5 449V453M317.5 450V453M318.5 450V453M319.5 449V453M320.5 449V455M321.5 448V453M322.5 450V453M323.5 451V453M324.5 449V453M325.5 450V453M326.5 449V454M327.5 451V453M328.5 451V452M329.5 448V453M330.5 450V453M331.5 450V454M332.5 450V453M333.5 450V453M334.5 451V452M335.5 451V453M336.5 450V453M337.5 449V454M338.5 450V452M339.5 450V457M340.5 449V457M341.5 446V453M342.5 449V454M343.5 450V455M344.5 446V453M345.5 450V454M346.5 450V453M347.5 448V458M348.5 445V453M349.5 450V454M350.5 447V455M351.5 450V454M352.5 449V457M353.5 450V455M354.5 448V454M355.5 450V454M356.5 450V454M357.5 449V455M358.5 444V453M359.5 448V454M360.5 450V454M361.5 449V454M362.5 448V454M363.5 448V454M364.5 445V453M365.5 446V453M366.5 450V456M367.5 446V454M368.5 450V455M369.5 447V454M370.5 448V455M371.5 448V454M372.5 449V457M373.5 445V455M374.5 448V454M375.5 447V454M376.5 448V456M377.5 446V457M378.5 448V454M379.5 449V455M380.5 450V458M381.5 450V453M382.5 449V453M383.5 449V453M384.5 450V455M385.5 447V455M386.5 448V454M387.5 447V454M388.5 447V454M389.5 450V453M390.5 449V455M391.5 448V455M392.5 450V453M393.5 449V456M394.5 446V458M395.5 449V453M396.5 447V455M397.5 449V455M398.5 448V453M399.5 449V454M400.5 450V453M401.5 450V454M402.5 449V454M403.5 449V453M404.5 445V454M405.5 449V457M406.5 448V453M407.5 449V453M408.5 450V453M409.5 448V454M410.5 449V457M411.5 449V453M412.5 447V454M413.5 450V456M414.5 447V453M415.5 447V455M416.5 450V453M417.5 448V455M418.5 448V457M419.5 450V455M420.5 448V454M421.5 450V455M422.5 448V453M423.5 449V455M424.5 450V453M425.5 447V455M426.5 449V455M427.5 449V453M428.5 450V453M429.5 449V453M430.5 449V453M431.5 450V455M432.5 450V453M433.5 448V454M434.5 447V453M435.5 450V453M436.5 450V453M437.5 448V455M438.5 450V454M439.5 449V453M440.5 450V453M441.5 449V453M442.5 450V454M443.5 449V455M444.5 448V453M445.5 448V453M446.5 447V454M447.5 450V454M448.5 450V455M449.5 450V453M450.5 449V454M451.5 449V453M452.5 449V453M453.5 450V455M454.5 449V454M455.5 450V453M456.5 449V454M457.5 450V454M458.5 446V454M459.5 450V453M460.5 447V453M461.5 449V456M462.5 450V453M463.5 448V454M464.5 448V453M465.5 450V457M466.5 449V454M467.5 450V453M468.5 449V456M469.5 446V454M470.5 449V453M471.5 446V454M472.5 449V453M473.5 450V453M474.5 450V454M475.5 449V453M476.5 450V454M477.5 449V457M478.5 450V454M479.5 449V454M480.5 450V453M481.5 447V455M482.5 449V453M483.5 450V453M484.5 449V456M485.5 448V456M486.5 450V454M487.5 450V453M488.5 449V453M489.5 449V453M490.5 450V453M491.5 450V456M492.5 450V457M493.5 450V457M494.5 448V456M495.5 446V453M496.5 450V455M497.5 449V456M498.5 450V455M499.5 448V455M500.5 450V454M501.5 449V453M502.5 449V453M503.5 448V453M504.5 448V454M505.5 449V455M506.5 450V455M507.5 450V454M508.5 449V454M509.5 448V453M510.5 447V457M511.5 449V456M512.5 450V454M513.5 447V455M514.5 449V453M515.5 448V454M516.5 450V453M517.5 448V457M518.5 450V454M519.5 450V455M520.5 448V454M521.5 449V455M522.5 449V457M523.5 449V454M524.5 449V454M525.5 446V453M526.5 447V455M527.5 448V453M528.5 448V454M529.5 449V454M530.5 448V454M531.5 450V454M532.5 449V453M533.5 448V455M534.5 450V454M535.5 450V454M536.5 448V453M537.5 449V458M538.5 450V453M539.5 448V455M540.5 447V454M541.5 444V454M542.5 450V457M543.5 449V455M544.5 449V453M545.5 447V454M546.5 450V456M547.5 445V457M548.5 446V453M549.5 447V453M550.5 448V457M551.5 447V457M552.5 449V458M553.5 448V454M554.5 450V454M555.5 446V455M556.5 450V454M557.5 446V458M558.5 449V454M559.5 446V456M560.5 447V454M561.5 446V460M562.5 448V465M563.5 429V463M564.5 438V464M565.5 441V477M566.5 444V460M567.5 434V464M568.5 441V457M569.5 444V460M570.5 445V483M571.5 437V460M572.5 430V463M573.5 433V460M574.5 421V463M575.5 442V462M576.5 434V472M577.5 446V459M578.5 447V457M579.5 429V460M580.5 440V461M581.5 447V474M582.5 446V471M583.5 438V457M584.5 423V479M585.5 446V483M586.5 439V463M587.5 403V469M588.5 425V460M589.5 430V463M590.5 443V472M591.5 445V458M592.5 425V461M593.5 435V469M594.5 438V462M595.5 444V459M596.5 442V458M597.5 425V461M598.5 440V471M599.5 431V467M600.5 445V457M601.5 445V467M602.5 425V457M603.5 436V462M604.5 443V470M605.5 429V479M606.5 421V488M607.5 445V463M608.5 443V464M609.5 443V473M610.5 444V460M611.5 443V472M612.5 428V471M613.5 439V457M614.5 436V456M615.5 433V459M616.5 441V464M617.5 438V470M618.5 429V463M619.5 424V462M620.5 441V473M621.5 442V463M622.5 442V465M623.5 404V461M624.5 422V478M625.5 440V459M626.5 444V467M627.5 442V473M628.5 441V457M629.5 446V481M630.5 447V468M631.5 433V470M632.5 440V471M633.5 443V460M634.5 443V472M635.5 432V460M636.5 440V459M637.5 437V485M638.5 440V458M639.5 442V457M640.5 444V470M641.5 407V458M642.5 442V467M643.5 436V457M644.5 445V457M645.5 444V466M646.5 446V483M647.5 443V467M648.5 443V477M649.5 439V459M650.5 433V472M651.5 443V470M652.5 433V474M653.5 447V484M654.5 445V464M655.5 432V463M656.5 427V466M657.5 430V467M658.5 417V458M659.5 447V461M660.5 445V466M661.5 445V463M662.5 444V473M663.5 443V462M664.5 446V468M665.5 446V464M666.5 435V461M667.5 433V485M668.5 432V459M669.5 439V464M670.5 414V468M671.5 438V460M672.5 423V458M673.5 440V463M674.5 433V458M675.5 436V461M676.5 441V477M677.5 445V470M678.5 444V466M679.5 433V464M680.5 443V480M681.5 447V457M682.5 434V467M683.5 437V464M684.5 440V460M685.5 444V455M686.5 448V453M687.5 448V455M688.5 450V454M689.5 448V454M690.5 450V453M691.5 447V456M692.5 447V455M693.5 450V453M694.5 446V453M695.5 450V453M696.5 448V453M697.5 450V453M698.5 449V455M699.5 450V454M700.5 447V453M701.5 450V453M702.5 449V456M703.5 449V454M704.5 449V455M705.5 449V454M706.5 448V454M707.5 446V454M708.5 449V455M709.5 449V453M710.5 449V454M711.5 447V454M712.5 448V454M713.5 449V455M714.5 450V456M715.5 449V453M716.5 450V454M717.5 450V455M718.5 450V454M719.5 450V453M720.5 450V455M721.5 448V453M722.5 450V454M723.5 449V453M724.5 445V454M725.5 448V455M726.5 447V454M727.5 449V454M728.5 450V454M729.5 449V457M730.5 450V454M731.5 447V454M732.5 450V453M733.5 447V456M734.5 448V456M735.5 449V453M736.5 450V453M737.5 447V455M738.5 450V455M739.5 450V453M740.5 450V454M741.5 449V454M742.5 449V453M743.5 450V453M744.5 447V453M745.5 448V455M746.5 447V455M747.5 449V453M748.5 450V453M749.5 450V455M750.5 450V454M751.5 450V454M752.5 449V456M753.5 447V454M754.5 449V453M755.5 447V457M756.5 449V453M757.5 450V457M758.5 446V453M759.5 450V454M760.5 450V453M761.5 450V454M762.5 449V454M763.5 448V454M764.5 450V453M765.5 450V453M766.5 449V457M767.5 447V453M768.5 450V454M769.5 450V453M770.5 450V453M771.5 449V454M772.5 450V453M773.5 448V453M774.5 446V453M775.5 449V453M776.5 448V457M777.5 449V454M778.5 449V455M779.5 448V453M780.5 450V453M781.5 449V454M782.5 449V456M783.5 449V454M784.5 450V454M785.5 446V454M786.5 449V456M787.5 447V454M788.5 449V454M789.5 447V453M790.5 450V457M791.5 448V455M792.5 450V455M793.5 448V454M794.5 447V454M795.5 450V453M796.5 449V453M797.5 450V453M798.5 449V453M799.5 447V454M800.5 450V454M801.5 448V453M802.5 450V454M803.5 450V453M804.5 450V455M805.5 449V453M806.5 447V454M807.5 449V454M808.5 450V457M809.5 450V454M810.5 449V455M811.5 450V455M812.5 449V456M813.5 448V453M814.5 448V453M815.5 449V454M816.5 448V453M817.5 449V453M818.5 449V454M819.5 450V453M820.5 447V455M821.5 448V456M822.5 450V453M823.5 447V453M824.5 448V453M825.5 449V454M826.5 448V453M827.5 449V454M828.5 447V456M829.5 446V457M830.5 450V454M831.5 449V454M832.5 449V456M833.5 450V453M834.5 449V453M835.5 449V454M836.5 449V453M837.5 450V453M838.5 448V454M839.5 449V453M840.5 448V453M841.5 449V455M842.5 449V454M843.5 446V453M844.5 450V454M845.5 447V455M846.5 449V453M847.5 447V455M848.5 450V453M849.5 449V456M850.5 447V455M851.5 450V454M852.5 449V456M853.5 450V454M854.5 449V453M855.5 449V453M856.5 448V455M857.5 450V454M858.5 450V454M859.5 449V453M860.5 447V454M861.5 449V455M862.5 449V457M863.5 450V453M864.5 449V454M865.5 449V453M866.5 448V453M867.5 449V454M868.5 450V453M869.5 449V455M870.5 449V454M871.5 450V454M872.5 450V454M873.5 448V455M874.5 448V453M875.5 448V454M876.5 450V454M877.5 448V455M878.5 450V453M879.5 450V454M880.5 450V453M881.5 450V454M882.5 450V453M883.5 450V453M884.5 449V453M885.5 449V456M886.5 450V454M887.5 450V453M888.5 448V454M889.5 449V454M890.5 449V453M891.5 450V453M892.5 450V455M893.5 449V453M894.5 449V453M895.5 450V455M896.5 449V453M897.5 449V456M898.5 449V455M899.5 449V455M900.5 450V456M901.5 450V453M902.5 450V455M903.5 450V454M904.5 450V453M905.5 448V454M906.5 449V454M907.5 450V453M908.5 448V455M909.5 446V454M910.5 450V454M911.5 449V453M912.5 450V455M913.5 449V455M914.5 449V455M915.5 444V459M916.5 444V455M917.5 448V459M918.5 447V458M919.5 445V455M920.5 441V454M921.5 446V455M922.5 446V456M923.5 445V462M924.5 444V456M925.5 446V456M926.5 442V458M927.5 443V459M928.5 447V456M929.5 443V454M930.5 449V454M931.5 448V454M932.5 445V456M933.5 448V455M934.5 447V454M935.5 445V457M936.5 446V455M937.5 443V454M938.5 445V456M939.5 448V461M940.5 449V456M941.5 444V464M942.5 444V459M943.5 449V454M944.5 447V460M945.5 444V459M946.5 449V454M947.5 450V456M948.5 448V455M949.5 448V453M950.5 450V453M951.5 450V454M952.5 447V453M953.5 449V455M954.5 450V453M955.5 449V456M956.5 449V454M957.5 449V453M958.5 449V454M959.5 448V455M960.5 450V454M961.5 449V453M962.5 449V457M963.5 450V453M964.5 449V453M965.5 450V455M966.5 444V454M967.5 443V456M968.5 444V460M969.5 444V469M970.5 444V468M971.5 443V461M972.5 441V458M973.5 440V456M974.5 426V459M975.5 437V459M976.5 441V458M977.5 427V462M978.5 444V457M979.5 439V456M980.5 445V458M981.5 428V463M982.5 446V462M983.5 432V498M984.5 445V482M985.5 408V475M986.5 442V468M987.5 441V459M988.5 441V465M989.5 437V460M990.5 441V467M991.5 445V456M992.5 443V456M993.5 445V460M994.5 447V461M995.5 433V459M996.5 439V462M997.5 443V474M998.5 443V485M999.5 422V480M1000.5 437V471M1001.5 445V477M1002.5 435V460M1003.5 438V460M1004.5 445V482M1005.5 446V486M1006.5 418V472M1007.5 443V459M1008.5 441V464M1009.5 437V460M1010.5 442V461M1011.5 440V459M1012.5 442V463M1013.5 442V458M1014.5 445V473M1015.5 441V466M1016.5 442V468M1017.5 442V460M1018.5 444V476M1019.5 427V456M1020.5 425V457M1021.5 442V459M1022.5 420V475M1023.5 445V456M1024.5 446V458M1025.5 420V458M1026.5 444V459M1027.5 442V458M1028.5 447V468M1029.5 425V456M1030.5 427V460M1031.5 444V463M1032.5 437V456M1033.5 432V457M1034.5 433V460M1035.5 445V465M1036.5 438V457M1037.5 424V483M1038.5 447V469M1039.5 446V460M1040.5 445V457M1041.5 440V465M1042.5 431V456M1043.5 421V473M1044.5 447V465M1045.5 434V458M1046.5 439V464M1047.5 446V477M1048.5 437V457M1049.5 437V461M1050.5 418V478M1051.5 434V459M1052.5 446V458M1053.5 446V460M1054.5 440V461M1055.5 444V457M1056.5 444V465M1057.5 447V461M1058.5 441V456M1059.5 446V457M1060.5 442V457M1061.5 445V462M1062.5 436V469M1063.5 444V468M1064.5 440V458M1065.5 437V462M1066.5 439V463M1067.5 434V458M1068.5 446V458M1069.5 438V457M1070.5 436V457M1071.5 443V463M1072.5 439V459M1073.5 441V467M1074.5 443V465M1075.5 444V459M1076.5 445V457M1077.5 436V459M1078.5 436V459M1079.5 433V455M1080.5 427V463M1081.5 448V462M1082.5 439V458M1083.5 443V470M1084.5 448V460M1085.5 442V461M1086.5 439V465M1087.5 446V455M1088.5 440V460M1089.5 447V460M1090.5 442V459M1091.5 447V456M1092.5 435V459M1093.5 442V469M1094.5 438V455M1095.5 445V467M1096.5 448V457M1097.5 443V456M1098.5 441V459M1099.5 448V456M1100.5 448V461M1101.5 443V463M1102.5 444V461M1103.5 445V454M1104.5 448V454M1105.5 444V456" stroke="#000080" stroke-width="1" fill="none" shape-rendering="crispEdges"/>
<g shape-rendering="crispEdges">
<rect x="1178" y="161" width="31" height="1" fill="#8a8a8a" />
<rect x="1178" y="161" width="1" height="23" fill="#8a8a8a" />
<rect x="1179" y="167" width="3" height="1" fill="#8a8a8a" />
<rect x="1179" y="173" width="3" height="1" fill="#8a8a8a" />
<rect x="1179" y="179" width="3" height="1" fill="#8a8a8a" />
</g>
<path d="M1179 178 L1189.5 167.5 L1199.5 177.5 L1209 168" stroke="#0a0f8a" fill="none" stroke-width="1" shape-rendering="auto"/>
<text x="1214" y="177" font-size="12" fill="#111" textLength="30.6" lengthAdjust="spacingAndGlyphs" >EMG1</text>
<g shape-rendering="crispEdges">
<rect x="1178" y="278" width="31" height="1" fill="#8a8a8a" />
<rect x="1178" y="278" width="1" height="23" fill="#8a8a8a" />
<rect x="1179" y="284" width="3" height="1" fill="#8a8a8a" />
<rect x="1179" y="290" width="3" height="1" fill="#8a8a8a" />
<rect x="1179" y="296" width="3" height="1" fill="#8a8a8a" />
</g>
<path d="M1179 294.5 H1189.5 V284.5 H1199.5 V294.5 H1209" stroke="#a83434" fill="none" stroke-width="1.2" shape-rendering="crispEdges"/>
<text x="1214" y="294" font-size="12" fill="#111" textLength="64.2" lengthAdjust="spacingAndGlyphs" >Power EMG1</text>
<g shape-rendering="crispEdges">
<rect x="1178" y="395" width="31" height="1" fill="#8a8a8a" />
<rect x="1178" y="395" width="1" height="23" fill="#8a8a8a" />
<rect x="1179" y="401" width="3" height="1" fill="#8a8a8a" />
<rect x="1179" y="407" width="3" height="1" fill="#8a8a8a" />
<rect x="1179" y="413" width="3" height="1" fill="#8a8a8a" />
</g>
<path d="M1179 412 L1189.5 401.5 L1199.5 411.5 L1209 402" stroke="#0a0f8a" fill="none" stroke-width="1" shape-rendering="auto"/>
<text x="1214" y="411" font-size="12" fill="#111" textLength="30.6" lengthAdjust="spacingAndGlyphs" >EMG2</text>
<g shape-rendering="crispEdges">
<rect x="1178" y="512" width="31" height="1" fill="#8a8a8a" />
<rect x="1178" y="512" width="1" height="23" fill="#8a8a8a" />
<rect x="1179" y="518" width="3" height="1" fill="#8a8a8a" />
<rect x="1179" y="524" width="3" height="1" fill="#8a8a8a" />
<rect x="1179" y="530" width="3" height="1" fill="#8a8a8a" />
</g>
<path d="M1179 528.5 H1189.5 V518.5 H1199.5 V528.5 H1209" stroke="#a83434" fill="none" stroke-width="1.2" shape-rendering="crispEdges"/>
<text x="1214" y="528" font-size="12" fill="#111" textLength="64.2" lengthAdjust="spacingAndGlyphs" >Power EMG2</text>
</svg></body></html>
